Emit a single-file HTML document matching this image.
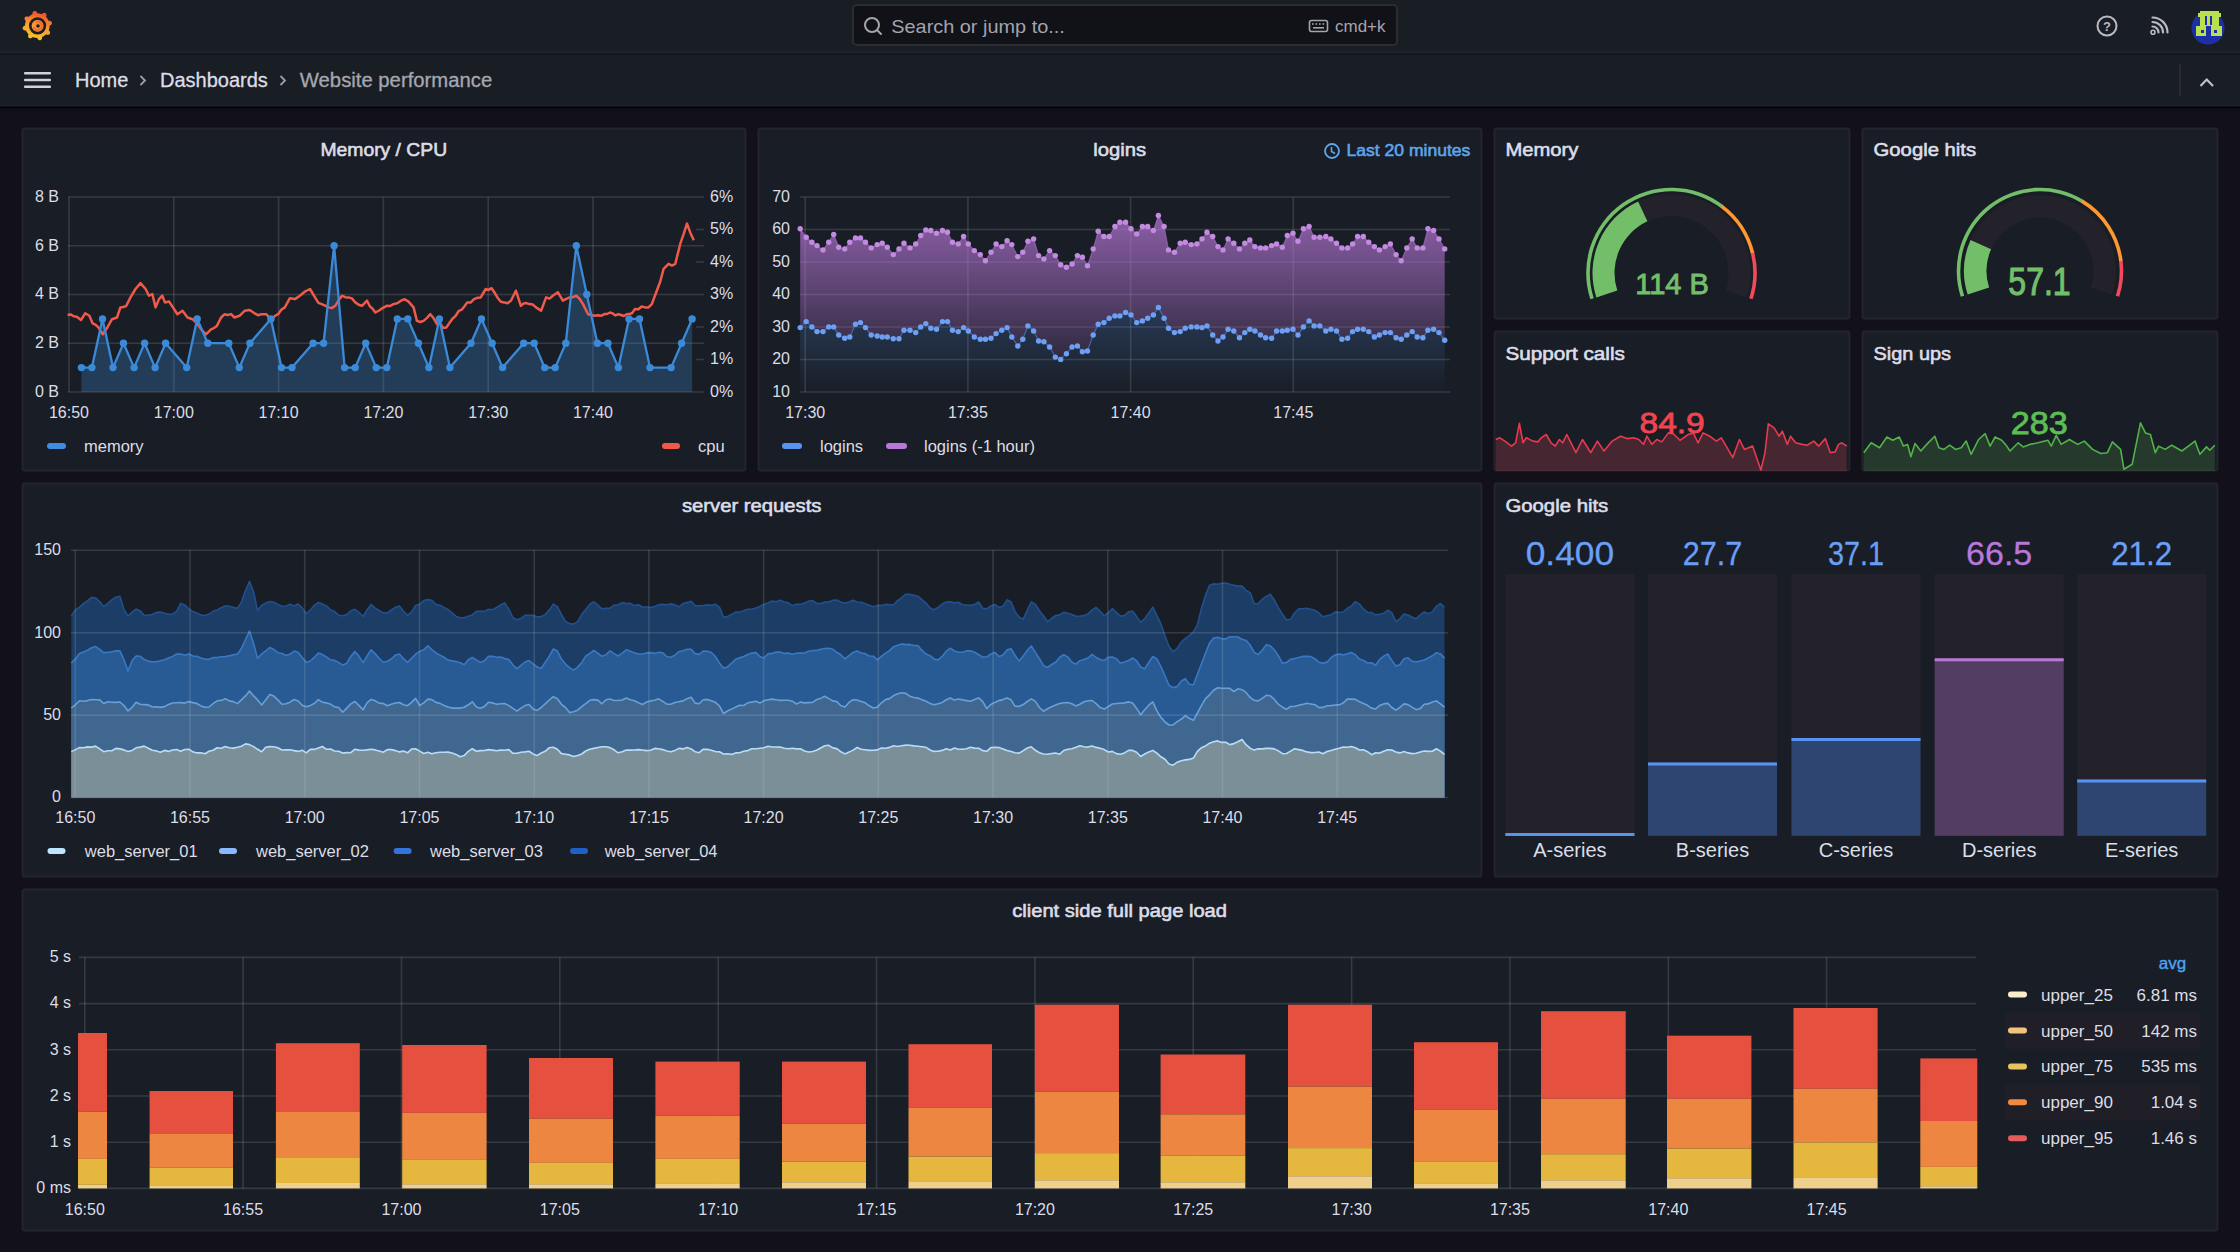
<!DOCTYPE html>
<html><head><meta charset="utf-8"><style>
html,body{margin:0;padding:0;background:#12111a;width:2240px;height:1252px;overflow:hidden}
svg{display:block;font-family:"Liberation Sans", sans-serif}
</style></head><body>
<svg width="2240" height="1252" viewBox="0 0 2240 1252">
<rect x="0.0" y="0.0" width="2240.0" height="1252.0" fill="#12111a" />
<rect x="0.0" y="0.0" width="2240.0" height="53.0" fill="#191e25" />
<rect x="0.0" y="51.5" width="2240.0" height="2.0" fill="#21262e" />
<rect x="0.0" y="53.5" width="2240.0" height="1.5" fill="#14181e" />
<rect x="0.0" y="55.0" width="2240.0" height="51.0" fill="#191e25" />
<rect x="0.0" y="105.0" width="2240.0" height="1.5" fill="#1e232a" />
<rect x="0.0" y="106.5" width="2240.0" height="2.0" fill="#05060a" />
<rect x="0.0" y="108.5" width="2240.0" height="3.0" fill="#0c0f16" />
<defs><linearGradient id="logog" x1="0" y1="1" x2="0.3" y2="0"><stop offset="0" stop-color="#fccf1c"/><stop offset="0.55" stop-color="#f7a030"/><stop offset="1" stop-color="#f0562c"/></linearGradient></defs>
<path d="M49.60,25.60 L49.60,25.71 L49.60,25.81 L49.60,25.92 L49.59,26.03 L49.59,26.14 L49.58,26.24 L49.58,26.35 L49.57,26.46 L49.56,26.57 L49.55,26.67 L49.54,26.78 L49.53,26.89 L49.52,26.99 L49.51,27.10 L49.49,27.21 L49.48,27.31 L49.46,27.42 L49.45,27.52 L49.43,27.63 L49.41,27.74 L49.39,27.84 L49.37,27.95 L49.35,28.05 L49.33,28.16 L49.31,28.26 L49.28,28.37 L49.26,28.47 L49.23,28.58 L49.21,28.68 L49.18,28.78 L49.15,28.89 L49.12,28.99 L49.09,29.09 L49.06,29.20 L49.03,29.30 L49.00,29.40 L48.96,29.50 L48.93,29.60 L48.89,29.71 L48.86,29.81 L48.82,29.91 L48.78,30.01 L48.74,30.11 L48.70,30.21 L48.95,30.43 L49.22,30.66 L49.40,30.86 L49.54,31.05 L49.65,31.23 L49.74,31.40 L49.82,31.57 L49.89,31.74 L49.94,31.90 L49.98,32.06 L50.02,32.22 L50.04,32.37 L50.05,32.52 L50.06,32.67 L50.05,32.81 L50.04,32.95 L50.02,33.09 L49.99,33.22 L49.95,33.35 L49.91,33.48 L49.85,33.60 L49.79,33.71 L49.72,33.82 L49.65,33.93 L49.57,34.03 L49.48,34.13 L49.38,34.22 L49.28,34.30 L49.17,34.38 L49.05,34.46 L48.93,34.52 L48.80,34.59 L48.67,34.64 L48.52,34.69 L48.37,34.73 L48.22,34.76 L48.05,34.79 L47.89,34.80 L47.71,34.81 L47.52,34.80 L47.33,34.79 L47.12,34.76 L46.89,34.70 L46.65,34.63 L46.34,34.49 L46.00,34.30 L45.92,34.37 L45.84,34.45 L45.77,34.52 L45.69,34.60 L45.61,34.67 L45.53,34.74 L45.45,34.81 L45.37,34.88 L45.29,34.95 L45.21,35.02 L45.12,35.09 L45.04,35.16 L44.96,35.23 L44.87,35.29 L44.79,35.36 L44.70,35.42 L44.62,35.49 L44.53,35.55 L44.44,35.61 L44.35,35.68 L44.27,35.74 L44.18,35.80 L44.09,35.86 L44.00,35.92 L43.91,35.97 L43.82,36.03 L43.73,36.09 L43.63,36.14 L43.54,36.20 L43.45,36.25 L43.36,36.31 L43.26,36.36 L43.17,36.41 L43.07,36.46 L42.98,36.51 L42.88,36.56 L42.79,36.61 L42.69,36.66 L42.60,36.70 L42.50,36.75 L42.40,36.79 L42.30,36.84 L42.20,36.88 L42.11,36.92 L42.13,37.25 L42.15,37.61 L42.13,37.87 L42.10,38.10 L42.05,38.31 L42.00,38.50 L41.93,38.68 L41.86,38.84 L41.78,39.00 L41.70,39.14 L41.61,39.27 L41.52,39.40 L41.42,39.51 L41.32,39.62 L41.22,39.72 L41.11,39.81 L41.00,39.89 L40.88,39.96 L40.76,40.03 L40.64,40.08 L40.52,40.13 L40.40,40.17 L40.27,40.20 L40.14,40.22 L40.01,40.24 L39.88,40.24 L39.75,40.24 L39.62,40.23 L39.48,40.20 L39.35,40.17 L39.21,40.13 L39.08,40.09 L38.94,40.03 L38.81,39.96 L38.68,39.88 L38.54,39.80 L38.41,39.70 L38.28,39.59 L38.15,39.47 L38.02,39.34 L37.89,39.19 L37.77,39.02 L37.65,38.82 L37.53,38.59 L37.41,38.28 L37.30,37.90 L37.19,37.90 L37.09,37.90 L36.98,37.90 L36.87,37.89 L36.76,37.89 L36.66,37.88 L36.55,37.88 L36.44,37.87 L36.33,37.86 L36.23,37.85 L36.12,37.84 L36.01,37.83 L35.91,37.82 L35.80,37.81 L35.69,37.79 L35.59,37.78 L35.48,37.76 L35.38,37.75 L35.27,37.73 L35.16,37.71 L35.06,37.69 L34.95,37.67 L34.85,37.65 L34.74,37.63 L34.64,37.61 L34.53,37.58 L34.43,37.56 L34.32,37.53 L34.22,37.51 L34.12,37.48 L34.01,37.45 L33.91,37.42 L33.81,37.39 L33.70,37.36 L33.60,37.33 L33.50,37.30 L33.40,37.26 L33.30,37.23 L33.19,37.19 L33.09,37.16 L32.99,37.12 L32.89,37.08 L32.79,37.04 L32.69,37.00 L32.47,37.25 L32.24,37.52 L32.04,37.70 L31.85,37.84 L31.67,37.95 L31.50,38.04 L31.33,38.12 L31.16,38.19 L31.00,38.24 L30.84,38.28 L30.68,38.32 L30.53,38.34 L30.38,38.35 L30.23,38.36 L30.09,38.35 L29.95,38.34 L29.81,38.32 L29.68,38.29 L29.55,38.25 L29.42,38.21 L29.30,38.15 L29.19,38.09 L29.08,38.02 L28.97,37.95 L28.87,37.87 L28.77,37.78 L28.68,37.68 L28.60,37.58 L28.52,37.47 L28.44,37.35 L28.38,37.23 L28.31,37.10 L28.26,36.97 L28.21,36.82 L28.17,36.67 L28.14,36.52 L28.11,36.35 L28.10,36.19 L28.09,36.01 L28.10,35.82 L28.11,35.63 L28.14,35.42 L28.20,35.19 L28.27,34.95 L28.41,34.64 L28.60,34.30 L28.53,34.22 L28.45,34.14 L28.38,34.07 L28.30,33.99 L28.23,33.91 L28.16,33.83 L28.09,33.75 L28.02,33.67 L27.95,33.59 L27.88,33.51 L27.81,33.42 L27.74,33.34 L27.67,33.26 L27.61,33.17 L27.54,33.09 L27.48,33.00 L27.41,32.92 L27.35,32.83 L27.29,32.74 L27.22,32.65 L27.16,32.57 L27.10,32.48 L27.04,32.39 L26.98,32.30 L26.93,32.21 L26.87,32.12 L26.81,32.03 L26.76,31.93 L26.70,31.84 L26.65,31.75 L26.59,31.66 L26.54,31.56 L26.49,31.47 L26.44,31.37 L26.39,31.28 L26.34,31.18 L26.29,31.09 L26.24,30.99 L26.20,30.90 L26.15,30.80 L26.11,30.70 L26.06,30.60 L26.02,30.50 L25.98,30.41 L25.65,30.43 L25.29,30.45 L25.03,30.43 L24.80,30.40 L24.59,30.35 L24.40,30.30 L24.22,30.23 L24.06,30.16 L23.90,30.08 L23.76,30.00 L23.63,29.91 L23.50,29.82 L23.39,29.72 L23.28,29.62 L23.18,29.52 L23.09,29.41 L23.01,29.30 L22.94,29.18 L22.87,29.06 L22.82,28.94 L22.77,28.82 L22.73,28.70 L22.70,28.57 L22.68,28.44 L22.66,28.31 L22.66,28.18 L22.66,28.05 L22.67,27.92 L22.70,27.78 L22.73,27.65 L22.77,27.51 L22.81,27.38 L22.87,27.24 L22.94,27.11 L23.02,26.98 L23.10,26.84 L23.20,26.71 L23.31,26.58 L23.43,26.45 L23.56,26.32 L23.71,26.19 L23.88,26.07 L24.08,25.95 L24.31,25.83 L24.62,25.71 L25.00,25.60 L25.00,25.49 L25.00,25.39 L25.00,25.28 L25.01,25.17 L25.01,25.06 L25.02,24.96 L25.02,24.85 L25.03,24.74 L25.04,24.63 L25.05,24.53 L25.06,24.42 L25.07,24.31 L25.08,24.21 L25.09,24.10 L25.11,23.99 L25.12,23.89 L25.14,23.78 L25.15,23.68 L25.17,23.57 L25.19,23.46 L25.21,23.36 L25.23,23.25 L25.25,23.15 L25.27,23.04 L25.29,22.94 L25.32,22.83 L25.34,22.73 L25.37,22.62 L25.39,22.52 L25.42,22.42 L25.45,22.31 L25.48,22.21 L25.51,22.11 L25.54,22.00 L25.57,21.90 L25.60,21.80 L25.64,21.70 L25.67,21.60 L25.71,21.49 L25.74,21.39 L25.78,21.29 L25.82,21.19 L25.86,21.09 L25.90,20.99 L25.65,20.77 L25.38,20.54 L25.20,20.34 L25.06,20.15 L24.95,19.97 L24.86,19.80 L24.78,19.63 L24.71,19.46 L24.66,19.30 L24.62,19.14 L24.58,18.98 L24.56,18.83 L24.55,18.68 L24.54,18.53 L24.55,18.39 L24.56,18.25 L24.58,18.11 L24.61,17.98 L24.65,17.85 L24.69,17.72 L24.75,17.60 L24.81,17.49 L24.88,17.38 L24.95,17.27 L25.03,17.17 L25.12,17.07 L25.22,16.98 L25.32,16.90 L25.43,16.82 L25.55,16.74 L25.67,16.68 L25.80,16.61 L25.93,16.56 L26.08,16.51 L26.23,16.47 L26.38,16.44 L26.55,16.41 L26.71,16.40 L26.89,16.39 L27.08,16.40 L27.27,16.41 L27.48,16.44 L27.71,16.50 L27.95,16.57 L28.26,16.71 L28.60,16.90 L28.68,16.83 L28.76,16.75 L28.83,16.68 L28.91,16.60 L28.99,16.53 L29.07,16.46 L29.15,16.39 L29.23,16.32 L29.31,16.25 L29.39,16.18 L29.48,16.11 L29.56,16.04 L29.64,15.97 L29.73,15.91 L29.81,15.84 L29.90,15.78 L29.98,15.71 L30.07,15.65 L30.16,15.59 L30.25,15.52 L30.33,15.46 L30.42,15.40 L30.51,15.34 L30.60,15.28 L30.69,15.23 L30.78,15.17 L30.87,15.11 L30.97,15.06 L31.06,15.00 L31.15,14.95 L31.24,14.89 L31.34,14.84 L31.43,14.79 L31.53,14.74 L31.62,14.69 L31.72,14.64 L31.81,14.59 L31.91,14.54 L32.00,14.50 L32.10,14.45 L32.20,14.41 L32.30,14.36 L32.40,14.32 L32.49,14.28 L32.47,13.95 L32.45,13.59 L32.47,13.33 L32.50,13.10 L32.55,12.89 L32.60,12.70 L32.67,12.52 L32.74,12.36 L32.82,12.20 L32.90,12.06 L32.99,11.93 L33.08,11.80 L33.18,11.69 L33.28,11.58 L33.38,11.48 L33.49,11.39 L33.60,11.31 L33.72,11.24 L33.84,11.17 L33.96,11.12 L34.08,11.07 L34.20,11.03 L34.33,11.00 L34.46,10.98 L34.59,10.96 L34.72,10.96 L34.85,10.96 L34.98,10.97 L35.12,11.00 L35.25,11.03 L35.39,11.07 L35.52,11.11 L35.66,11.17 L35.79,11.24 L35.92,11.32 L36.06,11.40 L36.19,11.50 L36.32,11.61 L36.45,11.73 L36.58,11.86 L36.71,12.01 L36.83,12.18 L36.95,12.38 L37.07,12.61 L37.19,12.92 L37.30,13.30 L37.41,13.30 L37.51,13.30 L37.62,13.30 L37.73,13.31 L37.84,13.31 L37.94,13.32 L38.05,13.32 L38.16,13.33 L38.27,13.34 L38.37,13.35 L38.48,13.36 L38.59,13.37 L38.69,13.38 L38.80,13.39 L38.91,13.41 L39.01,13.42 L39.12,13.44 L39.22,13.45 L39.33,13.47 L39.44,13.49 L39.54,13.51 L39.65,13.53 L39.75,13.55 L39.86,13.57 L39.96,13.59 L40.07,13.62 L40.17,13.64 L40.28,13.67 L40.38,13.69 L40.48,13.72 L40.59,13.75 L40.69,13.78 L40.79,13.81 L40.90,13.84 L41.00,13.87 L41.10,13.90 L41.20,13.94 L41.30,13.97 L41.41,14.01 L41.51,14.04 L41.61,14.08 L41.71,14.12 L41.81,14.16 L41.91,14.20 L42.13,13.95 L42.36,13.68 L42.56,13.50 L42.75,13.36 L42.93,13.25 L43.10,13.16 L43.27,13.08 L43.44,13.01 L43.60,12.96 L43.76,12.92 L43.92,12.88 L44.07,12.86 L44.22,12.85 L44.37,12.84 L44.51,12.85 L44.65,12.86 L44.79,12.88 L44.92,12.91 L45.05,12.95 L45.18,12.99 L45.30,13.05 L45.41,13.11 L45.52,13.18 L45.63,13.25 L45.73,13.33 L45.83,13.42 L45.92,13.52 L46.00,13.62 L46.08,13.73 L46.16,13.85 L46.22,13.97 L46.29,14.10 L46.34,14.23 L46.39,14.38 L46.43,14.53 L46.46,14.68 L46.49,14.85 L46.50,15.01 L46.51,15.19 L46.50,15.38 L46.49,15.57 L46.46,15.78 L46.40,16.01 L46.33,16.25 L46.19,16.56 L46.00,16.90 L46.07,16.98 L46.15,17.06 L46.22,17.13 L46.30,17.21 L46.37,17.29 L46.44,17.37 L46.51,17.45 L46.58,17.53 L46.65,17.61 L46.72,17.69 L46.79,17.78 L46.86,17.86 L46.93,17.94 L46.99,18.03 L47.06,18.11 L47.12,18.20 L47.19,18.28 L47.25,18.37 L47.31,18.46 L47.38,18.55 L47.44,18.63 L47.50,18.72 L47.56,18.81 L47.62,18.90 L47.67,18.99 L47.73,19.08 L47.79,19.17 L47.84,19.27 L47.90,19.36 L47.95,19.45 L48.01,19.54 L48.06,19.64 L48.11,19.73 L48.16,19.83 L48.21,19.92 L48.26,20.02 L48.31,20.11 L48.36,20.21 L48.40,20.30 L48.45,20.40 L48.49,20.50 L48.54,20.60 L48.58,20.70 L48.62,20.79 L48.95,20.77 L49.31,20.75 L49.57,20.77 L49.80,20.80 L50.01,20.85 L50.20,20.90 L50.38,20.97 L50.54,21.04 L50.70,21.12 L50.84,21.20 L50.97,21.29 L51.10,21.38 L51.21,21.48 L51.32,21.58 L51.42,21.68 L51.51,21.79 L51.59,21.90 L51.66,22.02 L51.73,22.14 L51.78,22.26 L51.83,22.38 L51.87,22.50 L51.90,22.63 L51.92,22.76 L51.94,22.89 L51.94,23.02 L51.94,23.15 L51.93,23.28 L51.90,23.42 L51.87,23.55 L51.83,23.69 L51.79,23.82 L51.73,23.96 L51.66,24.09 L51.58,24.22 L51.50,24.36 L51.40,24.49 L51.29,24.62 L51.17,24.75 L51.04,24.88 L50.89,25.01 L50.72,25.13 L50.52,25.25 L50.29,25.37 L49.98,25.49Z" fill="url(#logog)"/>
<circle cx="37.6" cy="25.8" r="7.3" fill="none" stroke="#1a1d24" stroke-width="2.6"/>
<path d="M37.6,21.6 A4.2,4.2 0 1 1 33.6,27" fill="none" stroke="#f26b3a" stroke-width="2.4"/>
<circle cx="38" cy="26" r="1.8" fill="#1a1d24"/>
<rect x="853" y="5" width="544" height="40" rx="4" fill="#111118" stroke="#2c2c35" stroke-width="2"/>
<circle cx="872" cy="25" r="7" fill="none" stroke="#a3a4ad" stroke-width="2"/><line x1="877" y1="30" x2="881" y2="34" stroke="#a3a4ad" stroke-width="2" stroke-linecap="round"/>
<text x="891.3" y="32.5" font-size="18.5" fill="#a3a4ad" text-anchor="start" font-weight="normal"  textLength="173.5" lengthAdjust="spacingAndGlyphs">Search or jump to...</text>
<rect x="1309.5" y="20.5" width="18" height="11" rx="2" fill="none" stroke="#a3a4ad" stroke-width="1.6"/>
<rect x="1312.0" y="23.2" width="1.6" height="1.6" fill="#a3a4ad"/>
<rect x="1315.5" y="23.2" width="1.6" height="1.6" fill="#a3a4ad"/>
<rect x="1319.0" y="23.2" width="1.6" height="1.6" fill="#a3a4ad"/>
<rect x="1322.5" y="23.2" width="1.6" height="1.6" fill="#a3a4ad"/>
<rect x="1313" y="27" width="11" height="1.6" fill="#a3a4ad"/>
<text x="1335.0" y="31.5" font-size="17" fill="#a3a4ad" text-anchor="start" font-weight="normal" >cmd+k</text>
<circle cx="2107" cy="26" r="9.5" fill="none" stroke="#b9bac3" stroke-width="2"/>
<text x="2107.0" y="31.0" font-size="13" fill="#b9bac3" text-anchor="middle" font-weight="bold" >?</text>
<g stroke="#b9bac3" stroke-width="2.2" fill="none" stroke-linecap="round"><path d="M2152.5,26.5 A6,6 0 0 1 2158.5,32.5"/><path d="M2152.5,22 A10.5,10.5 0 0 1 2163,32.5"/><path d="M2152.5,17.5 A15,15 0 0 1 2167.5,32.5"/></g><circle cx="2153" cy="32.3" r="2" fill="none" stroke="#b9bac3" stroke-width="1.6"/>
<circle cx="2208" cy="28" r="16.5" fill="#1d2fa8"/>
<g fill="#b9e04f"><rect x="2200" y="11" width="19" height="15"/><rect x="2198" y="13" width="4" height="4"/><rect x="2217" y="13" width="4" height="4"/><rect x="2196" y="26" width="10" height="10"/><rect x="2211" y="26" width="11" height="10"/></g>
<g fill="#1d2fa8"><rect x="2205" y="16" width="2" height="9"/><rect x="2210" y="16" width="2" height="9"/><rect x="2201" y="30" width="3" height="3"/><rect x="2214" y="30" width="3" height="3"/></g>
<g fill="#d0d1da"><rect x="24" y="72" width="27" height="2.6" rx="1"/><rect x="24" y="78.7" width="27" height="2.6" rx="1"/><rect x="24" y="85.4" width="27" height="2.6" rx="1"/></g>
<text x="75.0" y="86.8" font-size="20" fill="#dcdde6" text-anchor="start" font-weight="normal"  stroke="#dcdde6" stroke-width="0.3">Home</text>
<path d="M140.5,76 L145,80.5 L140.5,85" fill="none" stroke="#9d9ea8" stroke-width="1.8"/>
<text x="160.0" y="86.8" font-size="20" fill="#dcdde6" text-anchor="start" font-weight="normal"  stroke="#dcdde6" stroke-width="0.3">Dashboards</text>
<path d="M280.5,76 L285,80.5 L280.5,85" fill="none" stroke="#9d9ea8" stroke-width="1.8"/>
<text x="299.8" y="86.8" font-size="20" fill="#a6a7b0" text-anchor="start" font-weight="normal"  textLength="192.4" lengthAdjust="spacingAndGlyphs" stroke="#a6a7b0" stroke-width="0.3">Website performance</text>
<rect x="2179.0" y="64.0" width="2.0" height="32.0" fill="#2a2b32" />
<path d="M2200.5,86 L2206.7,79.5 L2213,86" fill="none" stroke="#c0c1ca" stroke-width="2.2"/>
<rect x="22.5" y="128.5" width="723" height="342" rx="2.5" fill="#191e26" stroke="#24242e" stroke-width="2"/>
<text x="383.8" y="156.4" font-size="18.5" fill="#dcdde8" text-anchor="middle" font-weight="normal"  textLength="126.7" lengthAdjust="spacingAndGlyphs" stroke="#dcdde8" stroke-width="0.6">Memory / CPU</text>
<line x1="68.0" y1="197.0" x2="704.0" y2="197.0" stroke="rgba(204,204,220,0.16)" stroke-width="1.6" />
<line x1="68.0" y1="245.8" x2="704.0" y2="245.8" stroke="rgba(204,204,220,0.16)" stroke-width="1.6" />
<line x1="68.0" y1="294.5" x2="704.0" y2="294.5" stroke="rgba(204,204,220,0.16)" stroke-width="1.6" />
<line x1="68.0" y1="343.2" x2="704.0" y2="343.2" stroke="rgba(204,204,220,0.16)" stroke-width="1.6" />
<line x1="68.0" y1="392.0" x2="704.0" y2="392.0" stroke="rgba(204,204,220,0.16)" stroke-width="1.6" />
<line x1="69.0" y1="197.0" x2="69.0" y2="392.0" stroke="rgba(204,204,220,0.16)" stroke-width="1.6" />
<line x1="173.8" y1="197.0" x2="173.8" y2="392.0" stroke="rgba(204,204,220,0.16)" stroke-width="1.6" />
<line x1="278.6" y1="197.0" x2="278.6" y2="392.0" stroke="rgba(204,204,220,0.16)" stroke-width="1.6" />
<line x1="383.4" y1="197.0" x2="383.4" y2="392.0" stroke="rgba(204,204,220,0.16)" stroke-width="1.6" />
<line x1="488.2" y1="197.0" x2="488.2" y2="392.0" stroke="rgba(204,204,220,0.16)" stroke-width="1.6" />
<line x1="593.0" y1="197.0" x2="593.0" y2="392.0" stroke="rgba(204,204,220,0.16)" stroke-width="1.6" />
<line x1="696.0" y1="359.5" x2="704.0" y2="359.5" stroke="rgba(204,204,220,0.16)" stroke-width="1.6" />
<line x1="696.0" y1="327.0" x2="704.0" y2="327.0" stroke="rgba(204,204,220,0.16)" stroke-width="1.6" />
<line x1="696.0" y1="262.0" x2="704.0" y2="262.0" stroke="rgba(204,204,220,0.16)" stroke-width="1.6" />
<line x1="696.0" y1="229.5" x2="704.0" y2="229.5" stroke="rgba(204,204,220,0.16)" stroke-width="1.6" />
<text x="59.0" y="201.8" font-size="16" fill="#dcdde6" text-anchor="end" font-weight="normal" >8 B</text>
<text x="59.0" y="250.6" font-size="16" fill="#dcdde6" text-anchor="end" font-weight="normal" >6 B</text>
<text x="59.0" y="299.3" font-size="16" fill="#dcdde6" text-anchor="end" font-weight="normal" >4 B</text>
<text x="59.0" y="348.1" font-size="16" fill="#dcdde6" text-anchor="end" font-weight="normal" >2 B</text>
<text x="59.0" y="396.8" font-size="16" fill="#dcdde6" text-anchor="end" font-weight="normal" >0 B</text>
<text x="710.0" y="201.8" font-size="16" fill="#dcdde6" text-anchor="start" font-weight="normal" >6%</text>
<text x="710.0" y="234.3" font-size="16" fill="#dcdde6" text-anchor="start" font-weight="normal" >5%</text>
<text x="710.0" y="266.8" font-size="16" fill="#dcdde6" text-anchor="start" font-weight="normal" >4%</text>
<text x="710.0" y="299.3" font-size="16" fill="#dcdde6" text-anchor="start" font-weight="normal" >3%</text>
<text x="710.0" y="331.8" font-size="16" fill="#dcdde6" text-anchor="start" font-weight="normal" >2%</text>
<text x="710.0" y="364.3" font-size="16" fill="#dcdde6" text-anchor="start" font-weight="normal" >1%</text>
<text x="710.0" y="396.8" font-size="16" fill="#dcdde6" text-anchor="start" font-weight="normal" >0%</text>
<text x="69.0" y="417.5" font-size="16" fill="#dcdde6" text-anchor="middle" font-weight="normal" >16:50</text>
<text x="173.8" y="417.5" font-size="16" fill="#dcdde6" text-anchor="middle" font-weight="normal" >17:00</text>
<text x="278.6" y="417.5" font-size="16" fill="#dcdde6" text-anchor="middle" font-weight="normal" >17:10</text>
<text x="383.4" y="417.5" font-size="16" fill="#dcdde6" text-anchor="middle" font-weight="normal" >17:20</text>
<text x="488.2" y="417.5" font-size="16" fill="#dcdde6" text-anchor="middle" font-weight="normal" >17:30</text>
<text x="593.0" y="417.5" font-size="16" fill="#dcdde6" text-anchor="middle" font-weight="normal" >17:40</text>
<path d="M81.4,367.6 L91.9,367.6 L102.5,318.9 L113.0,367.6 L123.5,343.2 L134.1,367.6 L144.6,343.2 L155.1,367.6 L165.6,343.2 L186.7,367.6 L197.2,318.9 L207.8,343.2 L228.8,343.2 L239.3,367.6 L249.9,343.2 L270.9,318.9 L281.5,367.6 L292.0,367.6 L313.1,343.2 L323.6,343.2 L334.1,245.8 L344.6,367.6 L355.2,367.6 L365.7,343.2 L376.2,367.6 L386.8,367.6 L397.3,318.9 L407.8,318.9 L418.4,343.2 L428.9,367.6 L439.4,318.9 L449.9,367.6 L471.0,343.2 L481.5,318.9 L492.1,343.2 L502.6,367.6 L523.7,343.2 L534.2,343.2 L544.7,367.6 L555.2,367.6 L565.8,343.2 L576.3,245.8 L586.8,294.5 L597.4,343.2 L607.9,343.2 L618.4,367.6 L629.0,318.9 L639.5,318.9 L650.0,367.6 L671.1,367.6 L681.6,343.2 L692.1,318.9 L692.1,392.0 L81.4,392.0Z" fill="#3d8ee0" fill-opacity="0.28"/>
<path d="M67.6,315.0 L70.6,314.4 L73.7,316.3 L76.8,316.7 L81.0,320.0 L85.2,313.3 L89.4,315.8 L92.7,323.4 L95.7,324.9 L98.6,327.6 L102.8,334.3 L107.8,326.7 L112.0,319.2 L117.0,317.5 L120.4,307.4 L123.3,307.1 L126.3,305.8 L130.5,297.4 L135.5,289.0 L140.5,283.1 L145.6,289.0 L148.9,295.7 L152.3,294.0 L155.6,307.4 L159.0,299.1 L162.3,295.7 L164.9,302.4 L169.1,301.6 L174.1,309.1 L177.4,314.2 L182.5,310.8 L187.5,317.5 L192.6,319.2 L197.6,324.2 L202.6,330.9 L206.0,334.3 L211.0,329.3 L213.9,328.1 L216.9,325.9 L221.1,317.5 L224.4,314.3 L227.8,315.0 L231.1,314.1 L234.5,317.5 L239.5,315.8 L244.6,310.8 L249.6,310.0 L254.6,313.3 L258.0,315.2 L261.3,314.2 L266.4,314.2 L271.4,320.0 L274.8,316.0 L278.1,314.2 L281.5,309.6 L284.8,307.4 L289.9,298.2 L294.9,299.1 L299.9,295.7 L305.0,291.5 L310.0,289.0 L315.0,297.4 L318.4,302.9 L321.7,304.1 L325.1,305.6 L328.5,307.4 L331.8,308.1 L335.2,305.8 L338.5,300.6 L341.9,295.7 L345.2,297.2 L348.6,297.4 L351.9,298.4 L355.3,302.4 L358.7,304.7 L362.0,305.8 L367.0,300.7 L369.8,306.3 L372.6,308.7 L375.4,312.5 L380.0,310.0 L382.1,308.3 L386.7,305.8 L390.1,306.0 L393.4,304.1 L397.2,303.2 L401.0,300.7 L404.7,299.2 L408.5,301.6 L413.6,307.4 L416.9,320.9 L420.3,322.0 L423.6,320.9 L427.0,317.9 L430.3,314.2 L433.7,318.3 L437.0,324.2 L440.1,323.3 L443.2,328.1 L446.3,327.6 L449.2,323.3 L452.1,319.2 L455.5,316.0 L458.9,310.8 L461.7,309.7 L464.5,306.2 L467.2,302.4 L470.6,302.6 L474.0,299.1 L477.3,297.8 L480.7,297.4 L485.7,289.0 L488.6,289.9 L491.6,288.2 L494.5,292.5 L497.4,297.4 L500.8,301.8 L504.2,302.4 L507.5,303.2 L510.9,300.7 L515.9,290.7 L520.9,305.8 L523.7,303.4 L526.5,303.1 L529.3,304.1 L532.7,304.5 L536.0,307.4 L541.1,310.8 L546.1,297.4 L549.5,298.6 L552.8,295.7 L557.9,292.3 L562.9,300.7 L566.2,298.8 L569.6,297.4 L573.0,297.1 L576.3,295.7 L579.7,299.0 L583.0,304.1 L588.1,314.2 L591.4,315.0 L594.8,315.8 L598.1,315.3 L601.5,315.8 L604.3,314.1 L607.1,314.0 L609.9,312.5 L612.7,313.4 L615.5,315.4 L618.3,314.2 L621.1,315.0 L623.8,316.0 L626.6,314.2 L629.4,314.1 L632.2,313.0 L635.0,309.1 L638.4,309.3 L641.7,306.5 L645.1,307.4 L648.5,307.4 L651.8,304.1 L656.8,290.7 L660.2,281.8 L663.6,268.9 L668.6,263.8 L671.9,265.6 L675.3,263.8 L680.3,243.7 L683.7,233.9 L687.0,223.6 L690.4,232.9 L693.8,240.3" fill="none" stroke="#f05a4a" stroke-width="2.5" stroke-linejoin="round"/>
<path d="M81.4,367.6 L91.9,367.6 L102.5,318.9 L113.0,367.6 L123.5,343.2 L134.1,367.6 L144.6,343.2 L155.1,367.6 L165.6,343.2 L186.7,367.6 L197.2,318.9 L207.8,343.2 L228.8,343.2 L239.3,367.6 L249.9,343.2 L270.9,318.9 L281.5,367.6 L292.0,367.6 L313.1,343.2 L323.6,343.2 L334.1,245.8 L344.6,367.6 L355.2,367.6 L365.7,343.2 L376.2,367.6 L386.8,367.6 L397.3,318.9 L407.8,318.9 L418.4,343.2 L428.9,367.6 L439.4,318.9 L449.9,367.6 L471.0,343.2 L481.5,318.9 L492.1,343.2 L502.6,367.6 L523.7,343.2 L534.2,343.2 L544.7,367.6 L555.2,367.6 L565.8,343.2 L576.3,245.8 L586.8,294.5 L597.4,343.2 L607.9,343.2 L618.4,367.6 L629.0,318.9 L639.5,318.9 L650.0,367.6 L671.1,367.6 L681.6,343.2 L692.1,318.9" fill="none" stroke="#3b8ad8" stroke-width="2.3" stroke-linejoin="round"/>
<g fill="#3b8ad8"><circle cx="81.4" cy="367.6" r="3.7"/><circle cx="91.9" cy="367.6" r="3.7"/><circle cx="102.5" cy="318.9" r="3.7"/><circle cx="113.0" cy="367.6" r="3.7"/><circle cx="123.5" cy="343.2" r="3.7"/><circle cx="134.1" cy="367.6" r="3.7"/><circle cx="144.6" cy="343.2" r="3.7"/><circle cx="155.1" cy="367.6" r="3.7"/><circle cx="165.6" cy="343.2" r="3.7"/><circle cx="186.7" cy="367.6" r="3.7"/><circle cx="197.2" cy="318.9" r="3.7"/><circle cx="207.8" cy="343.2" r="3.7"/><circle cx="228.8" cy="343.2" r="3.7"/><circle cx="239.3" cy="367.6" r="3.7"/><circle cx="249.9" cy="343.2" r="3.7"/><circle cx="270.9" cy="318.9" r="3.7"/><circle cx="281.5" cy="367.6" r="3.7"/><circle cx="292.0" cy="367.6" r="3.7"/><circle cx="313.1" cy="343.2" r="3.7"/><circle cx="323.6" cy="343.2" r="3.7"/><circle cx="334.1" cy="245.8" r="3.7"/><circle cx="344.6" cy="367.6" r="3.7"/><circle cx="355.2" cy="367.6" r="3.7"/><circle cx="365.7" cy="343.2" r="3.7"/><circle cx="376.2" cy="367.6" r="3.7"/><circle cx="386.8" cy="367.6" r="3.7"/><circle cx="397.3" cy="318.9" r="3.7"/><circle cx="407.8" cy="318.9" r="3.7"/><circle cx="418.4" cy="343.2" r="3.7"/><circle cx="428.9" cy="367.6" r="3.7"/><circle cx="439.4" cy="318.9" r="3.7"/><circle cx="449.9" cy="367.6" r="3.7"/><circle cx="471.0" cy="343.2" r="3.7"/><circle cx="481.5" cy="318.9" r="3.7"/><circle cx="492.1" cy="343.2" r="3.7"/><circle cx="502.6" cy="367.6" r="3.7"/><circle cx="523.7" cy="343.2" r="3.7"/><circle cx="534.2" cy="343.2" r="3.7"/><circle cx="544.7" cy="367.6" r="3.7"/><circle cx="555.2" cy="367.6" r="3.7"/><circle cx="565.8" cy="343.2" r="3.7"/><circle cx="576.3" cy="245.8" r="3.7"/><circle cx="586.8" cy="294.5" r="3.7"/><circle cx="597.4" cy="343.2" r="3.7"/><circle cx="607.9" cy="343.2" r="3.7"/><circle cx="618.4" cy="367.6" r="3.7"/><circle cx="629.0" cy="318.9" r="3.7"/><circle cx="639.5" cy="318.9" r="3.7"/><circle cx="650.0" cy="367.6" r="3.7"/><circle cx="671.1" cy="367.6" r="3.7"/><circle cx="681.6" cy="343.2" r="3.7"/><circle cx="692.1" cy="318.9" r="3.7"/></g>
<rect x="47" y="443" width="19" height="6" rx="3" fill="#3d8ee0"/>
<text x="84.0" y="451.5" font-size="16.5" fill="#dcdde6" text-anchor="start" font-weight="normal" >memory</text>
<rect x="662" y="443" width="18" height="6" rx="3" fill="#f0584a"/>
<text x="698.0" y="451.5" font-size="16.5" fill="#dcdde6" text-anchor="start" font-weight="normal" >cpu</text>
<rect x="758.5" y="128.5" width="723" height="342" rx="2.5" fill="#191e26" stroke="#24242e" stroke-width="2"/>
<text x="1119.6" y="156.4" font-size="18.5" fill="#dcdde8" text-anchor="middle" font-weight="normal"  textLength="52.8" lengthAdjust="spacingAndGlyphs" stroke="#dcdde8" stroke-width="0.6">logins</text>
<circle cx="1332" cy="151" r="7" fill="none" stroke="#5ea6ea" stroke-width="1.8"/><path d="M1331.5,147 L1331.5,151.5 L1335,153.5" fill="none" stroke="#5ea6ea" stroke-width="1.6"/>
<text x="1346.6" y="156.3" font-size="16.5" fill="#5ea6ea" text-anchor="start" font-weight="normal"  textLength="123.8" lengthAdjust="spacingAndGlyphs" stroke="#5ea6ea" stroke-width="0.55">Last 20 minutes</text>
<line x1="800.0" y1="197.0" x2="1450.0" y2="197.0" stroke="rgba(204,204,220,0.16)" stroke-width="1.6" />
<line x1="800.0" y1="229.5" x2="1450.0" y2="229.5" stroke="rgba(204,204,220,0.16)" stroke-width="1.6" />
<line x1="800.0" y1="262.0" x2="1450.0" y2="262.0" stroke="rgba(204,204,220,0.16)" stroke-width="1.6" />
<line x1="800.0" y1="294.5" x2="1450.0" y2="294.5" stroke="rgba(204,204,220,0.16)" stroke-width="1.6" />
<line x1="800.0" y1="327.0" x2="1450.0" y2="327.0" stroke="rgba(204,204,220,0.16)" stroke-width="1.6" />
<line x1="800.0" y1="359.5" x2="1450.0" y2="359.5" stroke="rgba(204,204,220,0.16)" stroke-width="1.6" />
<line x1="800.0" y1="392.0" x2="1450.0" y2="392.0" stroke="rgba(204,204,220,0.16)" stroke-width="1.6" />
<line x1="805.2" y1="197.0" x2="805.2" y2="392.0" stroke="rgba(204,204,220,0.16)" stroke-width="1.6" />
<line x1="967.9" y1="197.0" x2="967.9" y2="392.0" stroke="rgba(204,204,220,0.16)" stroke-width="1.6" />
<line x1="1130.6" y1="197.0" x2="1130.6" y2="392.0" stroke="rgba(204,204,220,0.16)" stroke-width="1.6" />
<line x1="1293.3" y1="197.0" x2="1293.3" y2="392.0" stroke="rgba(204,204,220,0.16)" stroke-width="1.6" />
<text x="790.0" y="201.8" font-size="16" fill="#dcdde6" text-anchor="end" font-weight="normal" >70</text>
<text x="790.0" y="234.3" font-size="16" fill="#dcdde6" text-anchor="end" font-weight="normal" >60</text>
<text x="790.0" y="266.8" font-size="16" fill="#dcdde6" text-anchor="end" font-weight="normal" >50</text>
<text x="790.0" y="299.3" font-size="16" fill="#dcdde6" text-anchor="end" font-weight="normal" >40</text>
<text x="790.0" y="331.8" font-size="16" fill="#dcdde6" text-anchor="end" font-weight="normal" >30</text>
<text x="790.0" y="364.3" font-size="16" fill="#dcdde6" text-anchor="end" font-weight="normal" >20</text>
<text x="790.0" y="396.8" font-size="16" fill="#dcdde6" text-anchor="end" font-weight="normal" >10</text>
<text x="805.2" y="417.5" font-size="16" fill="#dcdde6" text-anchor="middle" font-weight="normal" >17:30</text>
<text x="967.9" y="417.5" font-size="16" fill="#dcdde6" text-anchor="middle" font-weight="normal" >17:35</text>
<text x="1130.6" y="417.5" font-size="16" fill="#dcdde6" text-anchor="middle" font-weight="normal" >17:40</text>
<text x="1293.3" y="417.5" font-size="16" fill="#dcdde6" text-anchor="middle" font-weight="normal" >17:45</text>
<defs><linearGradient id="gpur" gradientUnits="userSpaceOnUse" x1="0" y1="197" x2="0" y2="392"><stop offset="0" stop-color="#b877d9" stop-opacity="0.8"/><stop offset="1" stop-color="#b877d9" stop-opacity="0"/></linearGradient><linearGradient id="gblu" gradientUnits="userSpaceOnUse" x1="0" y1="197" x2="0" y2="392"><stop offset="0" stop-color="#5794f2" stop-opacity="0.55"/><stop offset="1" stop-color="#5794f2" stop-opacity="0"/></linearGradient></defs>
<path d="M800.2,228.8 L806.2,237.2 L811.9,242.2 L817.0,245.6 L823.0,249.9 L828.7,242.2 L833.7,234.5 L838.7,247.3 L844.7,248.9 L849.8,242.2 L855.5,237.9 L860.5,237.9 L865.5,242.2 L871.2,247.9 L877.2,244.6 L882.2,243.2 L887.3,247.3 L893.3,254.6 L899.0,248.9 L904.0,243.2 L910.0,247.9 L915.7,243.9 L920.7,235.5 L925.8,229.9 L930.8,230.5 L936.5,233.2 L942.5,230.5 L947.5,232.2 L952.5,242.2 L958.2,243.9 L963.6,236.5 L968.3,243.9 L974.3,250.6 L980.3,254.6 L985.4,260.7 L991.0,252.3 L996.1,243.9 L1001.8,246.6 L1007.1,240.6 L1011.8,244.6 L1017.8,256.6 L1022.8,252.3 L1027.9,241.2 L1033.6,238.9 L1038.6,255.6 L1043.9,259.0 L1049.6,250.6 L1055.3,255.6 L1060.7,264.7 L1066.4,267.3 L1072.1,264.0 L1077.4,255.6 L1082.4,257.3 L1087.5,265.7 L1093.2,248.9 L1098.2,231.2 L1103.9,236.5 L1109.2,236.5 L1114.9,226.5 L1119.9,222.2 L1125.6,222.2 L1131.0,228.8 L1136.7,233.9 L1142.4,226.5 L1147.7,226.5 L1153.4,230.5 L1158.4,215.5 L1164.1,226.5 L1168.5,249.9 L1174.5,252.3 L1180.2,243.2 L1185.2,242.2 L1191.2,244.6 L1196.9,243.9 L1202.0,238.9 L1207.0,232.2 L1212.7,236.5 L1218.0,246.6 L1223.0,249.9 L1228.1,238.9 L1233.8,243.2 L1239.5,248.9 L1244.8,243.2 L1249.8,239.9 L1254.9,246.6 L1260.5,247.9 L1265.6,247.9 L1271.6,245.6 L1276.6,243.9 L1282.3,247.3 L1287.3,235.5 L1293.0,233.2 L1298.0,241.2 L1303.4,228.8 L1309.1,226.5 L1314.1,237.2 L1319.8,237.2 L1325.8,236.5 L1330.9,238.9 L1336.5,243.2 L1341.9,247.9 L1347.6,247.9 L1352.6,243.9 L1357.6,236.5 L1363.3,236.5 L1368.7,242.2 L1374.4,246.6 L1379.4,249.9 L1385.1,246.6 L1390.4,243.9 L1396.1,254.6 L1401.2,260.7 L1406.8,247.9 L1412.2,238.9 L1417.2,247.9 L1422.9,247.9 L1427.9,228.8 L1433.6,230.5 L1439.0,238.9 L1444.7,248.9 L1444.7,340.3 L1439.0,332.6 L1433.6,329.3 L1427.9,330.3 L1422.9,337.7 L1417.2,337.0 L1412.2,331.6 L1406.8,335.0 L1401.2,339.3 L1396.1,337.7 L1390.4,332.6 L1385.1,332.6 L1379.4,335.0 L1374.4,337.0 L1368.7,331.6 L1363.3,329.3 L1357.6,329.3 L1352.6,331.6 L1347.6,338.3 L1341.9,339.3 L1336.5,331.0 L1330.9,329.3 L1325.8,331.0 L1319.8,325.9 L1314.1,325.9 L1309.1,320.9 L1303.4,326.9 L1298.0,335.0 L1293.0,329.3 L1287.3,330.3 L1282.3,331.0 L1276.6,331.0 L1271.6,338.3 L1265.6,337.7 L1260.5,335.0 L1254.9,331.0 L1249.8,329.3 L1244.8,332.6 L1239.5,337.7 L1233.8,331.0 L1228.1,329.3 L1223.0,337.0 L1218.0,341.0 L1212.7,335.0 L1207.0,325.9 L1202.0,327.6 L1196.9,326.9 L1191.2,326.9 L1185.2,328.3 L1180.2,331.6 L1174.5,332.6 L1168.5,328.3 L1164.1,318.2 L1158.4,307.5 L1153.4,314.9 L1147.7,318.2 L1142.4,320.9 L1136.7,322.6 L1131.0,314.9 L1125.6,312.5 L1119.9,315.9 L1114.9,315.9 L1109.2,318.2 L1103.9,322.6 L1098.2,324.3 L1093.2,335.0 L1087.5,351.0 L1082.4,351.7 L1077.4,346.0 L1072.1,347.0 L1066.4,353.7 L1060.7,359.4 L1055.3,357.1 L1049.6,347.0 L1043.9,341.7 L1038.6,341.0 L1033.6,331.0 L1027.9,325.9 L1022.8,339.3 L1017.8,346.0 L1011.8,337.0 L1007.1,327.6 L1001.8,330.3 L996.1,333.6 L991.0,338.3 L985.4,339.3 L980.3,339.3 L974.3,337.0 L968.3,331.0 L963.6,327.6 L958.2,331.6 L952.5,330.3 L947.5,321.6 L942.5,321.6 L936.5,329.3 L930.8,328.3 L925.8,323.6 L920.7,326.9 L915.7,332.6 L910.0,330.3 L904.0,330.3 L899.0,338.7 L893.3,338.7 L887.3,337.0 L882.2,337.0 L877.2,336.0 L871.2,335.0 L865.5,327.6 L860.5,322.6 L855.5,324.3 L849.8,337.0 L844.7,338.3 L838.7,335.0 L833.7,326.9 L828.7,326.9 L823.0,331.6 L817.0,331.6 L811.9,326.9 L806.2,321.6 L800.2,327.6Z" fill="url(#gpur)"/>
<path d="M800.2,327.6 L806.2,321.6 L811.9,326.9 L817.0,331.6 L823.0,331.6 L828.7,326.9 L833.7,326.9 L838.7,335.0 L844.7,338.3 L849.8,337.0 L855.5,324.3 L860.5,322.6 L865.5,327.6 L871.2,335.0 L877.2,336.0 L882.2,337.0 L887.3,337.0 L893.3,338.7 L899.0,338.7 L904.0,330.3 L910.0,330.3 L915.7,332.6 L920.7,326.9 L925.8,323.6 L930.8,328.3 L936.5,329.3 L942.5,321.6 L947.5,321.6 L952.5,330.3 L958.2,331.6 L963.6,327.6 L968.3,331.0 L974.3,337.0 L980.3,339.3 L985.4,339.3 L991.0,338.3 L996.1,333.6 L1001.8,330.3 L1007.1,327.6 L1011.8,337.0 L1017.8,346.0 L1022.8,339.3 L1027.9,325.9 L1033.6,331.0 L1038.6,341.0 L1043.9,341.7 L1049.6,347.0 L1055.3,357.1 L1060.7,359.4 L1066.4,353.7 L1072.1,347.0 L1077.4,346.0 L1082.4,351.7 L1087.5,351.0 L1093.2,335.0 L1098.2,324.3 L1103.9,322.6 L1109.2,318.2 L1114.9,315.9 L1119.9,315.9 L1125.6,312.5 L1131.0,314.9 L1136.7,322.6 L1142.4,320.9 L1147.7,318.2 L1153.4,314.9 L1158.4,307.5 L1164.1,318.2 L1168.5,328.3 L1174.5,332.6 L1180.2,331.6 L1185.2,328.3 L1191.2,326.9 L1196.9,326.9 L1202.0,327.6 L1207.0,325.9 L1212.7,335.0 L1218.0,341.0 L1223.0,337.0 L1228.1,329.3 L1233.8,331.0 L1239.5,337.7 L1244.8,332.6 L1249.8,329.3 L1254.9,331.0 L1260.5,335.0 L1265.6,337.7 L1271.6,338.3 L1276.6,331.0 L1282.3,331.0 L1287.3,330.3 L1293.0,329.3 L1298.0,335.0 L1303.4,326.9 L1309.1,320.9 L1314.1,325.9 L1319.8,325.9 L1325.8,331.0 L1330.9,329.3 L1336.5,331.0 L1341.9,339.3 L1347.6,338.3 L1352.6,331.6 L1357.6,329.3 L1363.3,329.3 L1368.7,331.6 L1374.4,337.0 L1379.4,335.0 L1385.1,332.6 L1390.4,332.6 L1396.1,337.7 L1401.2,339.3 L1406.8,335.0 L1412.2,331.6 L1417.2,337.0 L1422.9,337.7 L1427.9,330.3 L1433.6,329.3 L1439.0,332.6 L1444.7,340.3 L1444.7,392.0 L800.2,392.0Z" fill="url(#gblu)"/>
<path d="M800.2,228.8 L806.2,237.2 L811.9,242.2 L817.0,245.6 L823.0,249.9 L828.7,242.2 L833.7,234.5 L838.7,247.3 L844.7,248.9 L849.8,242.2 L855.5,237.9 L860.5,237.9 L865.5,242.2 L871.2,247.9 L877.2,244.6 L882.2,243.2 L887.3,247.3 L893.3,254.6 L899.0,248.9 L904.0,243.2 L910.0,247.9 L915.7,243.9 L920.7,235.5 L925.8,229.9 L930.8,230.5 L936.5,233.2 L942.5,230.5 L947.5,232.2 L952.5,242.2 L958.2,243.9 L963.6,236.5 L968.3,243.9 L974.3,250.6 L980.3,254.6 L985.4,260.7 L991.0,252.3 L996.1,243.9 L1001.8,246.6 L1007.1,240.6 L1011.8,244.6 L1017.8,256.6 L1022.8,252.3 L1027.9,241.2 L1033.6,238.9 L1038.6,255.6 L1043.9,259.0 L1049.6,250.6 L1055.3,255.6 L1060.7,264.7 L1066.4,267.3 L1072.1,264.0 L1077.4,255.6 L1082.4,257.3 L1087.5,265.7 L1093.2,248.9 L1098.2,231.2 L1103.9,236.5 L1109.2,236.5 L1114.9,226.5 L1119.9,222.2 L1125.6,222.2 L1131.0,228.8 L1136.7,233.9 L1142.4,226.5 L1147.7,226.5 L1153.4,230.5 L1158.4,215.5 L1164.1,226.5 L1168.5,249.9 L1174.5,252.3 L1180.2,243.2 L1185.2,242.2 L1191.2,244.6 L1196.9,243.9 L1202.0,238.9 L1207.0,232.2 L1212.7,236.5 L1218.0,246.6 L1223.0,249.9 L1228.1,238.9 L1233.8,243.2 L1239.5,248.9 L1244.8,243.2 L1249.8,239.9 L1254.9,246.6 L1260.5,247.9 L1265.6,247.9 L1271.6,245.6 L1276.6,243.9 L1282.3,247.3 L1287.3,235.5 L1293.0,233.2 L1298.0,241.2 L1303.4,228.8 L1309.1,226.5 L1314.1,237.2 L1319.8,237.2 L1325.8,236.5 L1330.9,238.9 L1336.5,243.2 L1341.9,247.9 L1347.6,247.9 L1352.6,243.9 L1357.6,236.5 L1363.3,236.5 L1368.7,242.2 L1374.4,246.6 L1379.4,249.9 L1385.1,246.6 L1390.4,243.9 L1396.1,254.6 L1401.2,260.7 L1406.8,247.9 L1412.2,238.9 L1417.2,247.9 L1422.9,247.9 L1427.9,228.8 L1433.6,230.5 L1439.0,238.9 L1444.7,248.9" fill="none" stroke="#b877d9" stroke-width="1.2" stroke-opacity="0.55"/>
<g fill="#c28ae0"><circle cx="800.2" cy="228.8" r="2.7"/><circle cx="806.2" cy="237.2" r="2.7"/><circle cx="811.9" cy="242.2" r="2.7"/><circle cx="817.0" cy="245.6" r="2.7"/><circle cx="823.0" cy="249.9" r="2.7"/><circle cx="828.7" cy="242.2" r="2.7"/><circle cx="833.7" cy="234.5" r="2.7"/><circle cx="838.7" cy="247.3" r="2.7"/><circle cx="844.7" cy="248.9" r="2.7"/><circle cx="849.8" cy="242.2" r="2.7"/><circle cx="855.5" cy="237.9" r="2.7"/><circle cx="860.5" cy="237.9" r="2.7"/><circle cx="865.5" cy="242.2" r="2.7"/><circle cx="871.2" cy="247.9" r="2.7"/><circle cx="877.2" cy="244.6" r="2.7"/><circle cx="882.2" cy="243.2" r="2.7"/><circle cx="887.3" cy="247.3" r="2.7"/><circle cx="893.3" cy="254.6" r="2.7"/><circle cx="899.0" cy="248.9" r="2.7"/><circle cx="904.0" cy="243.2" r="2.7"/><circle cx="910.0" cy="247.9" r="2.7"/><circle cx="915.7" cy="243.9" r="2.7"/><circle cx="920.7" cy="235.5" r="2.7"/><circle cx="925.8" cy="229.9" r="2.7"/><circle cx="930.8" cy="230.5" r="2.7"/><circle cx="936.5" cy="233.2" r="2.7"/><circle cx="942.5" cy="230.5" r="2.7"/><circle cx="947.5" cy="232.2" r="2.7"/><circle cx="952.5" cy="242.2" r="2.7"/><circle cx="958.2" cy="243.9" r="2.7"/><circle cx="963.6" cy="236.5" r="2.7"/><circle cx="968.3" cy="243.9" r="2.7"/><circle cx="974.3" cy="250.6" r="2.7"/><circle cx="980.3" cy="254.6" r="2.7"/><circle cx="985.4" cy="260.7" r="2.7"/><circle cx="991.0" cy="252.3" r="2.7"/><circle cx="996.1" cy="243.9" r="2.7"/><circle cx="1001.8" cy="246.6" r="2.7"/><circle cx="1007.1" cy="240.6" r="2.7"/><circle cx="1011.8" cy="244.6" r="2.7"/><circle cx="1017.8" cy="256.6" r="2.7"/><circle cx="1022.8" cy="252.3" r="2.7"/><circle cx="1027.9" cy="241.2" r="2.7"/><circle cx="1033.6" cy="238.9" r="2.7"/><circle cx="1038.6" cy="255.6" r="2.7"/><circle cx="1043.9" cy="259.0" r="2.7"/><circle cx="1049.6" cy="250.6" r="2.7"/><circle cx="1055.3" cy="255.6" r="2.7"/><circle cx="1060.7" cy="264.7" r="2.7"/><circle cx="1066.4" cy="267.3" r="2.7"/><circle cx="1072.1" cy="264.0" r="2.7"/><circle cx="1077.4" cy="255.6" r="2.7"/><circle cx="1082.4" cy="257.3" r="2.7"/><circle cx="1087.5" cy="265.7" r="2.7"/><circle cx="1093.2" cy="248.9" r="2.7"/><circle cx="1098.2" cy="231.2" r="2.7"/><circle cx="1103.9" cy="236.5" r="2.7"/><circle cx="1109.2" cy="236.5" r="2.7"/><circle cx="1114.9" cy="226.5" r="2.7"/><circle cx="1119.9" cy="222.2" r="2.7"/><circle cx="1125.6" cy="222.2" r="2.7"/><circle cx="1131.0" cy="228.8" r="2.7"/><circle cx="1136.7" cy="233.9" r="2.7"/><circle cx="1142.4" cy="226.5" r="2.7"/><circle cx="1147.7" cy="226.5" r="2.7"/><circle cx="1153.4" cy="230.5" r="2.7"/><circle cx="1158.4" cy="215.5" r="2.7"/><circle cx="1164.1" cy="226.5" r="2.7"/><circle cx="1168.5" cy="249.9" r="2.7"/><circle cx="1174.5" cy="252.3" r="2.7"/><circle cx="1180.2" cy="243.2" r="2.7"/><circle cx="1185.2" cy="242.2" r="2.7"/><circle cx="1191.2" cy="244.6" r="2.7"/><circle cx="1196.9" cy="243.9" r="2.7"/><circle cx="1202.0" cy="238.9" r="2.7"/><circle cx="1207.0" cy="232.2" r="2.7"/><circle cx="1212.7" cy="236.5" r="2.7"/><circle cx="1218.0" cy="246.6" r="2.7"/><circle cx="1223.0" cy="249.9" r="2.7"/><circle cx="1228.1" cy="238.9" r="2.7"/><circle cx="1233.8" cy="243.2" r="2.7"/><circle cx="1239.5" cy="248.9" r="2.7"/><circle cx="1244.8" cy="243.2" r="2.7"/><circle cx="1249.8" cy="239.9" r="2.7"/><circle cx="1254.9" cy="246.6" r="2.7"/><circle cx="1260.5" cy="247.9" r="2.7"/><circle cx="1265.6" cy="247.9" r="2.7"/><circle cx="1271.6" cy="245.6" r="2.7"/><circle cx="1276.6" cy="243.9" r="2.7"/><circle cx="1282.3" cy="247.3" r="2.7"/><circle cx="1287.3" cy="235.5" r="2.7"/><circle cx="1293.0" cy="233.2" r="2.7"/><circle cx="1298.0" cy="241.2" r="2.7"/><circle cx="1303.4" cy="228.8" r="2.7"/><circle cx="1309.1" cy="226.5" r="2.7"/><circle cx="1314.1" cy="237.2" r="2.7"/><circle cx="1319.8" cy="237.2" r="2.7"/><circle cx="1325.8" cy="236.5" r="2.7"/><circle cx="1330.9" cy="238.9" r="2.7"/><circle cx="1336.5" cy="243.2" r="2.7"/><circle cx="1341.9" cy="247.9" r="2.7"/><circle cx="1347.6" cy="247.9" r="2.7"/><circle cx="1352.6" cy="243.9" r="2.7"/><circle cx="1357.6" cy="236.5" r="2.7"/><circle cx="1363.3" cy="236.5" r="2.7"/><circle cx="1368.7" cy="242.2" r="2.7"/><circle cx="1374.4" cy="246.6" r="2.7"/><circle cx="1379.4" cy="249.9" r="2.7"/><circle cx="1385.1" cy="246.6" r="2.7"/><circle cx="1390.4" cy="243.9" r="2.7"/><circle cx="1396.1" cy="254.6" r="2.7"/><circle cx="1401.2" cy="260.7" r="2.7"/><circle cx="1406.8" cy="247.9" r="2.7"/><circle cx="1412.2" cy="238.9" r="2.7"/><circle cx="1417.2" cy="247.9" r="2.7"/><circle cx="1422.9" cy="247.9" r="2.7"/><circle cx="1427.9" cy="228.8" r="2.7"/><circle cx="1433.6" cy="230.5" r="2.7"/><circle cx="1439.0" cy="238.9" r="2.7"/><circle cx="1444.7" cy="248.9" r="2.7"/></g>
<path d="M800.2,327.6 L806.2,321.6 L811.9,326.9 L817.0,331.6 L823.0,331.6 L828.7,326.9 L833.7,326.9 L838.7,335.0 L844.7,338.3 L849.8,337.0 L855.5,324.3 L860.5,322.6 L865.5,327.6 L871.2,335.0 L877.2,336.0 L882.2,337.0 L887.3,337.0 L893.3,338.7 L899.0,338.7 L904.0,330.3 L910.0,330.3 L915.7,332.6 L920.7,326.9 L925.8,323.6 L930.8,328.3 L936.5,329.3 L942.5,321.6 L947.5,321.6 L952.5,330.3 L958.2,331.6 L963.6,327.6 L968.3,331.0 L974.3,337.0 L980.3,339.3 L985.4,339.3 L991.0,338.3 L996.1,333.6 L1001.8,330.3 L1007.1,327.6 L1011.8,337.0 L1017.8,346.0 L1022.8,339.3 L1027.9,325.9 L1033.6,331.0 L1038.6,341.0 L1043.9,341.7 L1049.6,347.0 L1055.3,357.1 L1060.7,359.4 L1066.4,353.7 L1072.1,347.0 L1077.4,346.0 L1082.4,351.7 L1087.5,351.0 L1093.2,335.0 L1098.2,324.3 L1103.9,322.6 L1109.2,318.2 L1114.9,315.9 L1119.9,315.9 L1125.6,312.5 L1131.0,314.9 L1136.7,322.6 L1142.4,320.9 L1147.7,318.2 L1153.4,314.9 L1158.4,307.5 L1164.1,318.2 L1168.5,328.3 L1174.5,332.6 L1180.2,331.6 L1185.2,328.3 L1191.2,326.9 L1196.9,326.9 L1202.0,327.6 L1207.0,325.9 L1212.7,335.0 L1218.0,341.0 L1223.0,337.0 L1228.1,329.3 L1233.8,331.0 L1239.5,337.7 L1244.8,332.6 L1249.8,329.3 L1254.9,331.0 L1260.5,335.0 L1265.6,337.7 L1271.6,338.3 L1276.6,331.0 L1282.3,331.0 L1287.3,330.3 L1293.0,329.3 L1298.0,335.0 L1303.4,326.9 L1309.1,320.9 L1314.1,325.9 L1319.8,325.9 L1325.8,331.0 L1330.9,329.3 L1336.5,331.0 L1341.9,339.3 L1347.6,338.3 L1352.6,331.6 L1357.6,329.3 L1363.3,329.3 L1368.7,331.6 L1374.4,337.0 L1379.4,335.0 L1385.1,332.6 L1390.4,332.6 L1396.1,337.7 L1401.2,339.3 L1406.8,335.0 L1412.2,331.6 L1417.2,337.0 L1422.9,337.7 L1427.9,330.3 L1433.6,329.3 L1439.0,332.6 L1444.7,340.3" fill="none" stroke="#5794f2" stroke-width="1.2" stroke-opacity="0.55"/>
<g fill="#6d9ff5"><circle cx="800.2" cy="327.6" r="2.7"/><circle cx="806.2" cy="321.6" r="2.7"/><circle cx="811.9" cy="326.9" r="2.7"/><circle cx="817.0" cy="331.6" r="2.7"/><circle cx="823.0" cy="331.6" r="2.7"/><circle cx="828.7" cy="326.9" r="2.7"/><circle cx="833.7" cy="326.9" r="2.7"/><circle cx="838.7" cy="335.0" r="2.7"/><circle cx="844.7" cy="338.3" r="2.7"/><circle cx="849.8" cy="337.0" r="2.7"/><circle cx="855.5" cy="324.3" r="2.7"/><circle cx="860.5" cy="322.6" r="2.7"/><circle cx="865.5" cy="327.6" r="2.7"/><circle cx="871.2" cy="335.0" r="2.7"/><circle cx="877.2" cy="336.0" r="2.7"/><circle cx="882.2" cy="337.0" r="2.7"/><circle cx="887.3" cy="337.0" r="2.7"/><circle cx="893.3" cy="338.7" r="2.7"/><circle cx="899.0" cy="338.7" r="2.7"/><circle cx="904.0" cy="330.3" r="2.7"/><circle cx="910.0" cy="330.3" r="2.7"/><circle cx="915.7" cy="332.6" r="2.7"/><circle cx="920.7" cy="326.9" r="2.7"/><circle cx="925.8" cy="323.6" r="2.7"/><circle cx="930.8" cy="328.3" r="2.7"/><circle cx="936.5" cy="329.3" r="2.7"/><circle cx="942.5" cy="321.6" r="2.7"/><circle cx="947.5" cy="321.6" r="2.7"/><circle cx="952.5" cy="330.3" r="2.7"/><circle cx="958.2" cy="331.6" r="2.7"/><circle cx="963.6" cy="327.6" r="2.7"/><circle cx="968.3" cy="331.0" r="2.7"/><circle cx="974.3" cy="337.0" r="2.7"/><circle cx="980.3" cy="339.3" r="2.7"/><circle cx="985.4" cy="339.3" r="2.7"/><circle cx="991.0" cy="338.3" r="2.7"/><circle cx="996.1" cy="333.6" r="2.7"/><circle cx="1001.8" cy="330.3" r="2.7"/><circle cx="1007.1" cy="327.6" r="2.7"/><circle cx="1011.8" cy="337.0" r="2.7"/><circle cx="1017.8" cy="346.0" r="2.7"/><circle cx="1022.8" cy="339.3" r="2.7"/><circle cx="1027.9" cy="325.9" r="2.7"/><circle cx="1033.6" cy="331.0" r="2.7"/><circle cx="1038.6" cy="341.0" r="2.7"/><circle cx="1043.9" cy="341.7" r="2.7"/><circle cx="1049.6" cy="347.0" r="2.7"/><circle cx="1055.3" cy="357.1" r="2.7"/><circle cx="1060.7" cy="359.4" r="2.7"/><circle cx="1066.4" cy="353.7" r="2.7"/><circle cx="1072.1" cy="347.0" r="2.7"/><circle cx="1077.4" cy="346.0" r="2.7"/><circle cx="1082.4" cy="351.7" r="2.7"/><circle cx="1087.5" cy="351.0" r="2.7"/><circle cx="1093.2" cy="335.0" r="2.7"/><circle cx="1098.2" cy="324.3" r="2.7"/><circle cx="1103.9" cy="322.6" r="2.7"/><circle cx="1109.2" cy="318.2" r="2.7"/><circle cx="1114.9" cy="315.9" r="2.7"/><circle cx="1119.9" cy="315.9" r="2.7"/><circle cx="1125.6" cy="312.5" r="2.7"/><circle cx="1131.0" cy="314.9" r="2.7"/><circle cx="1136.7" cy="322.6" r="2.7"/><circle cx="1142.4" cy="320.9" r="2.7"/><circle cx="1147.7" cy="318.2" r="2.7"/><circle cx="1153.4" cy="314.9" r="2.7"/><circle cx="1158.4" cy="307.5" r="2.7"/><circle cx="1164.1" cy="318.2" r="2.7"/><circle cx="1168.5" cy="328.3" r="2.7"/><circle cx="1174.5" cy="332.6" r="2.7"/><circle cx="1180.2" cy="331.6" r="2.7"/><circle cx="1185.2" cy="328.3" r="2.7"/><circle cx="1191.2" cy="326.9" r="2.7"/><circle cx="1196.9" cy="326.9" r="2.7"/><circle cx="1202.0" cy="327.6" r="2.7"/><circle cx="1207.0" cy="325.9" r="2.7"/><circle cx="1212.7" cy="335.0" r="2.7"/><circle cx="1218.0" cy="341.0" r="2.7"/><circle cx="1223.0" cy="337.0" r="2.7"/><circle cx="1228.1" cy="329.3" r="2.7"/><circle cx="1233.8" cy="331.0" r="2.7"/><circle cx="1239.5" cy="337.7" r="2.7"/><circle cx="1244.8" cy="332.6" r="2.7"/><circle cx="1249.8" cy="329.3" r="2.7"/><circle cx="1254.9" cy="331.0" r="2.7"/><circle cx="1260.5" cy="335.0" r="2.7"/><circle cx="1265.6" cy="337.7" r="2.7"/><circle cx="1271.6" cy="338.3" r="2.7"/><circle cx="1276.6" cy="331.0" r="2.7"/><circle cx="1282.3" cy="331.0" r="2.7"/><circle cx="1287.3" cy="330.3" r="2.7"/><circle cx="1293.0" cy="329.3" r="2.7"/><circle cx="1298.0" cy="335.0" r="2.7"/><circle cx="1303.4" cy="326.9" r="2.7"/><circle cx="1309.1" cy="320.9" r="2.7"/><circle cx="1314.1" cy="325.9" r="2.7"/><circle cx="1319.8" cy="325.9" r="2.7"/><circle cx="1325.8" cy="331.0" r="2.7"/><circle cx="1330.9" cy="329.3" r="2.7"/><circle cx="1336.5" cy="331.0" r="2.7"/><circle cx="1341.9" cy="339.3" r="2.7"/><circle cx="1347.6" cy="338.3" r="2.7"/><circle cx="1352.6" cy="331.6" r="2.7"/><circle cx="1357.6" cy="329.3" r="2.7"/><circle cx="1363.3" cy="329.3" r="2.7"/><circle cx="1368.7" cy="331.6" r="2.7"/><circle cx="1374.4" cy="337.0" r="2.7"/><circle cx="1379.4" cy="335.0" r="2.7"/><circle cx="1385.1" cy="332.6" r="2.7"/><circle cx="1390.4" cy="332.6" r="2.7"/><circle cx="1396.1" cy="337.7" r="2.7"/><circle cx="1401.2" cy="339.3" r="2.7"/><circle cx="1406.8" cy="335.0" r="2.7"/><circle cx="1412.2" cy="331.6" r="2.7"/><circle cx="1417.2" cy="337.0" r="2.7"/><circle cx="1422.9" cy="337.7" r="2.7"/><circle cx="1427.9" cy="330.3" r="2.7"/><circle cx="1433.6" cy="329.3" r="2.7"/><circle cx="1439.0" cy="332.6" r="2.7"/><circle cx="1444.7" cy="340.3" r="2.7"/></g>
<rect x="782" y="443" width="20" height="6" rx="3" fill="#5794f2"/>
<text x="820.0" y="451.5" font-size="16.5" fill="#dcdde6" text-anchor="start" font-weight="normal" >logins</text>
<rect x="886" y="443" width="21" height="6" rx="3" fill="#b877d9"/>
<text x="924.0" y="451.5" font-size="16.5" fill="#dcdde6" text-anchor="start" font-weight="normal" >logins (-1 hour)</text>
<rect x="1494.5" y="128.5" width="355" height="190" rx="2.5" fill="#191e26" stroke="#24242e" stroke-width="2"/>
<rect x="1862.5" y="128.5" width="355" height="190" rx="2.5" fill="#191e26" stroke="#24242e" stroke-width="2"/>
<text x="1505.4" y="156.4" font-size="18.5" fill="#dcdde8" text-anchor="start" font-weight="normal"  textLength="73" lengthAdjust="spacingAndGlyphs" stroke="#dcdde8" stroke-width="0.6">Memory</text>
<text x="1873.6" y="156.4" font-size="18.5" fill="#dcdde8" text-anchor="start" font-weight="normal"  textLength="102.5" lengthAdjust="spacingAndGlyphs" stroke="#dcdde8" stroke-width="0.6">Google hits</text>
<path d="M1590.37,299.36 A85.3,85.3 0 0 1 1723.43,205.33 L1721.24,208.18 A81.7,81.7 0 0 0 1593.80,298.25 Z" fill="#73bf69"/>
<path d="M1722.83,204.88 A85.3,85.3 0 0 1 1754.44,253.09 L1750.94,253.93 A81.7,81.7 0 0 0 1720.67,207.75 Z" fill="#ff9830"/>
<path d="M1754.27,252.36 A85.3,85.3 0 0 1 1752.63,299.36 L1749.20,298.25 A81.7,81.7 0 0 0 1750.77,253.23 Z" fill="#f2495c"/>
<path d="M1596.37,297.41 A79,79 0 1 1 1746.63,297.41 L1725.71,290.61 A57,57 0 1 0 1617.29,290.61 Z" fill="#23222b"/>
<path d="M1596.37,297.41 A79,79 0 0 1 1638.11,201.40 L1647.41,221.34 A57,57 0 0 0 1617.29,290.61 Z" fill="#73bf69"/>
<text x="1672.0" y="294.0" font-size="29.6" fill="#73bf69" text-anchor="middle" font-weight="normal"  textLength="73.7" lengthAdjust="spacingAndGlyphs" stroke="#73bf69" stroke-width="0.9">114 B</text>
<path d="M1960.78,296.74 A83.3,83.3 0 0 1 2083.52,199.98 L2081.64,203.04 A79.7,79.7 0 0 0 1964.20,295.63 Z" fill="#73bf69"/>
<path d="M2082.90,199.60 A83.3,83.3 0 0 1 2122.76,261.57 L2119.19,261.98 A79.7,79.7 0 0 0 2081.05,202.68 Z" fill="#ff9830"/>
<path d="M2122.68,260.85 A83.3,83.3 0 0 1 2119.22,296.74 L2115.80,295.63 A79.7,79.7 0 0 0 2119.11,261.29 Z" fill="#f2495c"/>
<path d="M1967.72,294.49 A76,76 0 1 1 2112.28,294.49 L2090.88,287.53 A53.5,53.5 0 1 0 1989.12,287.53 Z" fill="#23222b"/>
<path d="M1967.72,294.49 A76,76 0 0 1 1970.57,240.09 L1991.13,249.24 A53.5,53.5 0 0 0 1989.12,287.53 Z" fill="#73bf69"/>
<text x="2039.5" y="294.5" font-size="38.7" fill="#73bf69" text-anchor="middle" font-weight="normal"  textLength="62.3" lengthAdjust="spacingAndGlyphs" stroke="#73bf69" stroke-width="1.1">57.1</text>
<rect x="1494.5" y="331.5" width="355" height="139" rx="2.5" fill="#191e26" stroke="#24242e" stroke-width="2"/>
<rect x="1862.5" y="331.5" width="355" height="139" rx="2.5" fill="#191e26" stroke="#24242e" stroke-width="2"/>
<text x="1505.4" y="359.5" font-size="18.5" fill="#dcdde8" text-anchor="start" font-weight="normal"  textLength="119.5" lengthAdjust="spacingAndGlyphs" stroke="#dcdde8" stroke-width="0.6">Support calls</text>
<text x="1873.6" y="359.5" font-size="18.5" fill="#dcdde8" text-anchor="start" font-weight="normal"  textLength="77.4" lengthAdjust="spacingAndGlyphs" stroke="#dcdde8" stroke-width="0.6">Sign ups</text>
<path d="M1495.8,439.5 L1499.9,437.8 L1504.9,441.1 L1511.5,446.1 L1515.6,442.8 L1519.4,423.3 L1523.0,442.8 L1526.3,437.8 L1532.9,441.1 L1537.9,441.9 L1541.2,437.8 L1546.2,434.5 L1551.1,442.8 L1555.2,446.1 L1559.4,439.5 L1562.7,442.8 L1566.8,434.5 L1572.6,446.1 L1575.9,452.7 L1582.5,439.5 L1590.8,452.7 L1597.4,441.1 L1604.0,451.0 L1612.2,441.1 L1620.5,436.2 L1627.1,438.6 L1633.7,437.8 L1638.7,439.5 L1643.6,444.4 L1646.9,436.2 L1651.9,444.4 L1656.8,439.5 L1661.8,441.9 L1668.4,432.9 L1673.3,433.7 L1680.0,440.3 L1688.2,434.5 L1693.2,432.9 L1698.1,442.8 L1703.1,432.9 L1709.7,436.2 L1716.3,441.1 L1721.3,437.8 L1726.2,446.1 L1732.8,457.6 L1739.4,439.5 L1744.4,449.4 L1752.6,446.1 L1760.9,470.0 L1765.0,452.7 L1768.3,423.8 L1774.1,427.9 L1779.1,436.2 L1782.4,431.2 L1787.3,444.4 L1790.6,436.2 L1795.6,442.8 L1802.2,444.4 L1807.1,445.2 L1813.8,441.1 L1818.7,446.1 L1825.3,438.6 L1830.3,452.7 L1835.2,451.9 L1838.5,444.4 L1841.8,442.8 L1846.8,446.1 L1846.8,471.0 L1495.8,471.0Z" fill="#f2495c" fill-opacity="0.21"/>
<path d="M1495.8,439.5 L1499.9,437.8 L1504.9,441.1 L1511.5,446.1 L1515.6,442.8 L1519.4,423.3 L1523.0,442.8 L1526.3,437.8 L1532.9,441.1 L1537.9,441.9 L1541.2,437.8 L1546.2,434.5 L1551.1,442.8 L1555.2,446.1 L1559.4,439.5 L1562.7,442.8 L1566.8,434.5 L1572.6,446.1 L1575.9,452.7 L1582.5,439.5 L1590.8,452.7 L1597.4,441.1 L1604.0,451.0 L1612.2,441.1 L1620.5,436.2 L1627.1,438.6 L1633.7,437.8 L1638.7,439.5 L1643.6,444.4 L1646.9,436.2 L1651.9,444.4 L1656.8,439.5 L1661.8,441.9 L1668.4,432.9 L1673.3,433.7 L1680.0,440.3 L1688.2,434.5 L1693.2,432.9 L1698.1,442.8 L1703.1,432.9 L1709.7,436.2 L1716.3,441.1 L1721.3,437.8 L1726.2,446.1 L1732.8,457.6 L1739.4,439.5 L1744.4,449.4 L1752.6,446.1 L1760.9,470.0 L1765.0,452.7 L1768.3,423.8 L1774.1,427.9 L1779.1,436.2 L1782.4,431.2 L1787.3,444.4 L1790.6,436.2 L1795.6,442.8 L1802.2,444.4 L1807.1,445.2 L1813.8,441.1 L1818.7,446.1 L1825.3,438.6 L1830.3,452.7 L1835.2,451.9 L1838.5,444.4 L1841.8,442.8 L1846.8,446.1" fill="none" stroke="#e8394d" stroke-width="1.6" stroke-linejoin="round"/>
<path d="M1863.8,452.7 L1871.2,442.8 L1879.5,447.7 L1886.9,437.0 L1892.7,440.3 L1899.3,437.0 L1903.4,446.1 L1907.6,444.4 L1910.9,456.8 L1915.0,443.6 L1920.8,451.0 L1927.4,443.6 L1934.8,436.2 L1938.9,447.7 L1943.9,449.4 L1949.7,445.2 L1955.5,449.4 L1961.2,447.7 L1966.2,441.1 L1971.1,454.3 L1978.6,439.5 L1985.2,433.7 L1990.1,446.1 L1995.1,437.0 L2001.7,440.3 L2006.7,446.1 L2010.0,451.0 L2018.2,442.8 L2023.2,446.9 L2029.8,444.4 L2038.0,442.8 L2048.0,440.3 L2051.3,446.1 L2056.2,435.3 L2061.2,444.4 L2069.4,439.5 L2077.7,444.4 L2084.3,441.1 L2092.6,449.4 L2100.8,453.5 L2107.4,452.7 L2112.4,441.9 L2120.6,449.4 L2123.9,469.2 L2132.2,464.2 L2140.5,422.9 L2145.4,432.9 L2150.4,434.5 L2155.3,452.7 L2158.6,446.1 L2165.2,449.4 L2171.8,445.2 L2181.8,451.0 L2188.4,446.1 L2195.0,441.1 L2199.9,454.3 L2206.5,446.9 L2209.8,450.2 L2214.8,445.2 L2214.8,471.0 L1863.8,471.0Z" fill="#56a64b" fill-opacity="0.21"/>
<path d="M1863.8,452.7 L1871.2,442.8 L1879.5,447.7 L1886.9,437.0 L1892.7,440.3 L1899.3,437.0 L1903.4,446.1 L1907.6,444.4 L1910.9,456.8 L1915.0,443.6 L1920.8,451.0 L1927.4,443.6 L1934.8,436.2 L1938.9,447.7 L1943.9,449.4 L1949.7,445.2 L1955.5,449.4 L1961.2,447.7 L1966.2,441.1 L1971.1,454.3 L1978.6,439.5 L1985.2,433.7 L1990.1,446.1 L1995.1,437.0 L2001.7,440.3 L2006.7,446.1 L2010.0,451.0 L2018.2,442.8 L2023.2,446.9 L2029.8,444.4 L2038.0,442.8 L2048.0,440.3 L2051.3,446.1 L2056.2,435.3 L2061.2,444.4 L2069.4,439.5 L2077.7,444.4 L2084.3,441.1 L2092.6,449.4 L2100.8,453.5 L2107.4,452.7 L2112.4,441.9 L2120.6,449.4 L2123.9,469.2 L2132.2,464.2 L2140.5,422.9 L2145.4,432.9 L2150.4,434.5 L2155.3,452.7 L2158.6,446.1 L2165.2,449.4 L2171.8,445.2 L2181.8,451.0 L2188.4,446.1 L2195.0,441.1 L2199.9,454.3 L2206.5,446.9 L2209.8,450.2 L2214.8,445.2" fill="none" stroke="#52b24a" stroke-width="1.6" stroke-linejoin="round"/>
<text x="1672.1" y="433.0" font-size="29.5" fill="#f24450" text-anchor="middle" font-weight="normal"  textLength="65.2" lengthAdjust="spacingAndGlyphs" stroke="#f24450" stroke-width="0.8">84.9</text>
<text x="2039.3" y="433.5" font-size="30.6" fill="#5cbd52" text-anchor="middle" font-weight="normal"  textLength="57" lengthAdjust="spacingAndGlyphs" stroke="#5cbd52" stroke-width="0.8">283</text>
<rect x="22.5" y="483.5" width="1459" height="393" rx="2.5" fill="#191e26" stroke="#24242e" stroke-width="2"/>
<text x="751.7" y="511.5" font-size="18.5" fill="#dcdde8" text-anchor="middle" font-weight="normal"  textLength="139.4" lengthAdjust="spacingAndGlyphs" stroke="#dcdde8" stroke-width="0.6">server requests</text>
<path d="M71.3,615.7 L75.4,609.9 L79.4,607.4 L83.5,603.4 L87.5,600.8 L91.6,597.3 L95.6,598.1 L99.7,601.6 L103.7,606.6 L107.8,603.4 L111.8,599.9 L115.9,597.2 L119.9,596.3 L124.0,609.6 L128.0,616.0 L132.1,612.1 L136.1,609.1 L140.2,610.9 L144.2,615.3 L148.3,615.2 L152.3,614.5 L156.4,612.6 L160.4,611.9 L164.5,613.3 L168.5,614.3 L172.6,614.2 L176.6,611.4 L180.7,603.4 L184.7,604.9 L188.8,608.8 L192.8,611.6 L196.9,612.9 L200.9,615.1 L205.0,615.5 L209.0,614.1 L213.1,611.3 L217.1,609.9 L221.2,607.8 L225.2,605.9 L229.3,606.3 L233.3,607.4 L237.4,608.4 L241.4,602.1 L245.5,590.6 L249.5,581.5 L253.6,591.9 L257.6,610.8 L261.7,605.1 L265.7,603.1 L269.8,601.6 L273.8,602.2 L277.9,604.5 L281.9,606.2 L286.0,606.0 L290.0,604.2 L294.1,605.9 L298.1,604.0 L302.2,607.9 L306.2,613.7 L310.3,610.2 L314.3,605.3 L318.4,602.5 L322.4,604.0 L326.5,605.9 L330.5,609.8 L334.6,611.6 L338.6,615.2 L342.7,615.8 L346.8,614.5 L350.8,610.9 L354.9,609.3 L358.9,612.3 L363.0,616.5 L367.0,610.0 L371.1,604.4 L375.1,608.1 L379.2,610.5 L383.2,612.9 L387.3,613.0 L391.3,610.0 L395.4,607.3 L399.4,606.1 L403.5,611.2 L407.5,615.3 L411.6,611.9 L415.6,605.5 L419.7,604.2 L423.7,600.6 L427.8,599.6 L431.8,600.2 L435.9,604.4 L439.9,605.3 L444.0,607.4 L448.0,609.6 L452.1,612.9 L456.1,616.4 L460.2,617.7 L464.2,617.8 L468.3,616.2 L472.3,614.9 L476.4,611.4 L480.4,611.3 L484.5,611.4 L488.5,609.3 L492.6,609.7 L496.6,607.5 L500.7,604.8 L504.7,602.9 L508.8,609.2 L512.8,617.6 L516.9,619.7 L520.9,618.5 L525.0,615.3 L529.0,615.2 L533.1,615.3 L537.1,617.1 L541.2,616.6 L545.2,614.6 L549.3,609.9 L553.3,604.1 L557.4,606.6 L561.4,614.4 L565.5,621.5 L569.5,623.6 L573.6,624.1 L577.6,621.6 L581.7,614.4 L585.7,609.4 L589.8,604.2 L593.8,601.8 L597.9,605.2 L601.9,608.8 L606.0,608.4 L610.0,608.2 L614.1,605.2 L618.1,604.7 L622.2,602.6 L626.3,603.5 L630.3,603.4 L634.4,605.6 L638.4,604.7 L642.5,607.0 L646.5,607.0 L650.6,607.5 L654.6,606.4 L658.7,604.7 L662.7,604.4 L666.8,604.7 L670.8,603.9 L674.9,604.8 L678.9,606.9 L683.0,603.6 L687.0,602.6 L691.1,601.3 L695.1,605.6 L699.2,605.8 L703.2,605.5 L707.3,604.9 L711.3,605.4 L715.4,604.2 L719.4,607.1 L723.5,617.0 L727.5,616.6 L731.6,614.4 L735.6,612.1 L739.7,612.0 L743.7,610.8 L747.8,609.2 L751.8,609.3 L755.9,608.0 L759.9,606.4 L764.0,604.2 L768.0,602.9 L772.1,601.1 L776.1,601.7 L780.2,600.3 L784.2,602.0 L788.3,602.9 L792.3,605.6 L796.4,604.3 L800.4,604.4 L804.5,603.1 L808.5,601.1 L812.6,600.7 L816.6,603.2 L820.7,603.6 L824.7,601.9 L828.8,602.0 L832.8,600.2 L836.9,600.0 L840.9,602.3 L845.0,603.0 L849.0,602.0 L853.1,600.2 L857.1,602.0 L861.2,602.2 L865.2,603.8 L869.3,605.2 L873.3,606.7 L877.4,605.4 L881.4,605.6 L885.5,604.4 L889.5,604.6 L893.6,604.7 L897.7,600.6 L901.7,597.6 L905.8,594.2 L909.8,594.4 L913.9,595.4 L917.9,596.2 L922.0,599.7 L926.0,603.1 L930.1,608.1 L934.1,609.8 L938.2,607.4 L942.2,604.0 L946.3,602.0 L950.3,601.9 L954.4,602.7 L958.4,602.2 L962.5,604.7 L966.5,605.1 L970.6,605.2 L974.6,604.5 L978.7,602.0 L982.7,608.4 L986.8,609.0 L990.8,605.9 L994.9,604.5 L998.9,607.4 L1003.0,606.3 L1007.0,599.8 L1011.1,602.0 L1015.1,611.8 L1019.2,617.2 L1023.2,619.3 L1027.3,610.1 L1031.3,601.9 L1035.4,604.5 L1039.4,610.8 L1043.5,615.8 L1047.5,621.8 L1051.6,618.5 L1055.6,615.5 L1059.7,614.9 L1063.7,612.3 L1067.8,613.2 L1071.8,614.5 L1075.9,616.2 L1079.9,616.0 L1084.0,615.6 L1088.0,613.9 L1092.1,609.9 L1096.1,607.5 L1100.2,611.4 L1104.2,615.9 L1108.3,612.6 L1112.3,608.7 L1116.4,612.3 L1120.4,616.1 L1124.5,615.6 L1128.5,611.9 L1132.6,611.3 L1136.6,616.6 L1140.7,622.4 L1144.7,618.6 L1148.8,612.9 L1152.8,607.2 L1156.9,615.6 L1160.9,623.8 L1165.0,636.0 L1169.0,646.4 L1173.1,651.8 L1177.2,648.4 L1181.2,642.1 L1185.3,638.4 L1189.3,635.7 L1193.4,631.8 L1197.4,624.9 L1201.5,608.2 L1205.5,595.2 L1209.6,585.2 L1213.6,583.9 L1217.7,584.3 L1221.7,583.4 L1225.8,583.0 L1229.8,584.2 L1233.9,585.2 L1237.9,586.1 L1242.0,586.1 L1246.0,590.5 L1250.1,592.6 L1254.1,603.6 L1258.2,603.7 L1262.2,599.3 L1266.3,596.4 L1270.3,594.1 L1274.4,600.2 L1278.4,607.9 L1282.5,614.2 L1286.5,619.9 L1290.6,619.2 L1294.6,613.0 L1298.7,608.8 L1302.7,608.8 L1306.8,608.3 L1310.8,609.2 L1314.9,610.3 L1318.9,613.0 L1323.0,616.8 L1327.0,615.7 L1331.1,614.8 L1335.1,612.0 L1339.2,612.2 L1343.2,612.0 L1347.3,608.3 L1351.3,606.1 L1355.4,601.6 L1359.4,603.9 L1363.5,608.9 L1367.5,612.4 L1371.6,612.6 L1375.6,614.9 L1379.7,614.4 L1383.7,613.3 L1387.8,610.2 L1391.8,612.7 L1395.9,621.5 L1399.9,618.8 L1404.0,614.1 L1408.0,615.0 L1412.1,617.3 L1416.1,618.8 L1420.2,614.8 L1424.2,611.9 L1428.3,613.8 L1432.3,611.9 L1436.4,606.3 L1440.4,603.5 L1444.5,607.4 L1444.5,797.5 L71.3,797.5Z" fill="#1c3d65"/>
<path d="M71.3,662.8 L75.4,658.9 L79.4,653.5 L83.5,652.0 L87.5,650.2 L91.6,647.8 L95.6,646.6 L99.7,649.4 L103.7,652.6 L107.8,652.5 L111.8,651.7 L115.9,650.9 L119.9,650.8 L124.0,659.8 L128.0,671.1 L132.1,660.6 L136.1,656.0 L140.2,656.2 L144.2,659.6 L148.3,661.1 L152.3,661.7 L156.4,661.6 L160.4,660.8 L164.5,659.8 L168.5,658.1 L172.6,656.4 L176.6,654.0 L180.7,654.1 L184.7,655.3 L188.8,653.9 L192.8,656.0 L196.9,656.3 L200.9,658.0 L205.0,659.1 L209.0,659.4 L213.1,657.6 L217.1,657.5 L221.2,656.8 L225.2,656.6 L229.3,655.7 L233.3,654.9 L237.4,654.0 L241.4,648.6 L245.5,639.5 L249.5,631.1 L253.6,643.4 L257.6,658.6 L261.7,653.8 L265.7,650.8 L269.8,647.5 L273.8,649.4 L277.9,652.7 L281.9,653.5 L286.0,655.5 L290.0,654.1 L294.1,651.1 L298.1,652.3 L302.2,657.6 L306.2,662.3 L310.3,661.0 L314.3,657.3 L318.4,653.1 L322.4,654.6 L326.5,656.9 L330.5,659.8 L334.6,660.4 L338.6,662.4 L342.7,665.2 L346.8,663.1 L350.8,656.5 L354.9,651.4 L358.9,656.1 L363.0,662.7 L367.0,656.2 L371.1,649.8 L375.1,653.6 L379.2,658.3 L383.2,662.2 L387.3,661.2 L391.3,659.0 L395.4,655.1 L399.4,654.0 L403.5,658.5 L407.5,662.4 L411.6,658.2 L415.6,654.2 L419.7,651.4 L423.7,649.8 L427.8,645.8 L431.8,649.5 L435.9,652.9 L439.9,655.1 L444.0,657.2 L448.0,660.1 L452.1,660.9 L456.1,661.6 L460.2,662.7 L464.2,664.7 L468.3,659.8 L472.3,657.5 L476.4,659.9 L480.4,662.5 L484.5,660.6 L488.5,656.3 L492.6,656.4 L496.6,657.2 L500.7,657.1 L504.7,658.6 L508.8,659.5 L512.8,664.8 L516.9,668.6 L520.9,665.3 L525.0,662.0 L529.0,660.5 L533.1,663.9 L537.1,667.0 L541.2,668.3 L545.2,662.4 L549.3,656.1 L553.3,649.0 L557.4,651.0 L561.4,659.1 L565.5,664.1 L569.5,667.7 L573.6,670.1 L577.6,667.1 L581.7,662.6 L585.7,656.1 L589.8,653.3 L593.8,650.5 L597.9,653.1 L601.9,656.3 L606.0,654.7 L610.0,650.9 L614.1,653.6 L618.1,656.0 L622.2,653.2 L626.3,649.8 L630.3,651.3 L634.4,652.8 L638.4,654.0 L642.5,654.0 L646.5,652.9 L650.6,652.6 L654.6,653.4 L658.7,652.2 L662.7,652.8 L666.8,656.5 L670.8,657.2 L674.9,655.2 L678.9,651.5 L683.0,650.8 L687.0,649.2 L691.1,649.3 L695.1,653.6 L699.2,654.4 L703.2,651.0 L707.3,651.2 L711.3,652.5 L715.4,656.5 L719.4,662.9 L723.5,668.0 L727.5,666.9 L731.6,663.1 L735.6,659.3 L739.7,657.8 L743.7,656.5 L747.8,654.5 L751.8,653.0 L755.9,652.6 L759.9,656.5 L764.0,658.0 L768.0,653.7 L772.1,653.4 L776.1,652.1 L780.2,652.1 L784.2,653.4 L788.3,653.1 L792.3,654.2 L796.4,653.3 L800.4,653.1 L804.5,653.0 L808.5,651.2 L812.6,650.5 L816.6,650.5 L820.7,649.2 L824.7,648.5 L828.8,648.2 L832.8,649.3 L836.9,652.3 L840.9,654.8 L845.0,658.9 L849.0,655.6 L853.1,652.5 L857.1,651.1 L861.2,653.0 L865.2,653.6 L869.3,656.0 L873.3,656.2 L877.4,659.8 L881.4,656.3 L885.5,653.1 L889.5,650.6 L893.6,646.7 L897.7,645.2 L901.7,643.9 L905.8,644.6 L909.8,644.4 L913.9,645.5 L917.9,645.5 L922.0,650.4 L926.0,654.0 L930.1,655.7 L934.1,659.1 L938.2,659.9 L942.2,656.4 L946.3,651.2 L950.3,648.2 L954.4,651.0 L958.4,652.2 L962.5,652.2 L966.5,650.9 L970.6,650.8 L974.6,652.2 L978.7,654.7 L982.7,657.1 L986.8,656.8 L990.8,654.1 L994.9,652.4 L998.9,656.6 L1003.0,655.0 L1007.0,649.9 L1011.1,648.6 L1015.1,655.5 L1019.2,661.1 L1023.2,656.1 L1027.3,650.3 L1031.3,646.0 L1035.4,652.4 L1039.4,658.7 L1043.5,665.7 L1047.5,667.5 L1051.6,664.5 L1055.6,662.2 L1059.7,657.2 L1063.7,654.8 L1067.8,656.9 L1071.8,662.0 L1075.9,664.2 L1079.9,660.7 L1084.0,659.5 L1088.0,658.0 L1092.1,654.3 L1096.1,657.5 L1100.2,659.5 L1104.2,660.5 L1108.3,657.2 L1112.3,657.1 L1116.4,658.7 L1120.4,663.1 L1124.5,662.0 L1128.5,660.5 L1132.6,658.0 L1136.6,660.8 L1140.7,667.1 L1144.7,668.7 L1148.8,662.5 L1152.8,656.5 L1156.9,658.9 L1160.9,666.5 L1165.0,675.8 L1169.0,685.3 L1173.1,687.6 L1177.2,686.6 L1181.2,681.3 L1185.3,678.7 L1189.3,684.2 L1193.4,684.8 L1197.4,674.4 L1201.5,663.7 L1205.5,653.0 L1209.6,643.0 L1213.6,638.0 L1217.7,637.3 L1221.7,638.7 L1225.8,638.9 L1229.8,636.7 L1233.9,636.7 L1237.9,637.0 L1242.0,639.2 L1246.0,640.4 L1250.1,645.0 L1254.1,652.2 L1258.2,654.6 L1262.2,650.2 L1266.3,644.8 L1270.3,645.7 L1274.4,650.0 L1278.4,655.9 L1282.5,663.1 L1286.5,662.5 L1290.6,659.3 L1294.6,658.6 L1298.7,657.5 L1302.7,656.4 L1306.8,656.4 L1310.8,656.6 L1314.9,658.7 L1318.9,662.2 L1323.0,663.1 L1327.0,662.1 L1331.1,657.7 L1335.1,655.0 L1339.2,654.0 L1343.2,654.9 L1347.3,653.7 L1351.3,652.4 L1355.4,654.8 L1359.4,659.1 L1363.5,660.4 L1367.5,663.0 L1371.6,662.8 L1375.6,665.2 L1379.7,659.3 L1383.7,656.1 L1387.8,654.0 L1391.8,660.4 L1395.9,666.0 L1399.9,664.8 L1404.0,658.8 L1408.0,657.8 L1412.1,661.3 L1416.1,661.9 L1420.2,661.1 L1424.2,660.0 L1428.3,657.9 L1432.3,655.8 L1436.4,652.7 L1440.4,653.9 L1444.5,658.1 L1444.5,797.5 L71.3,797.5Z" fill="#285b94"/>
<path d="M71.3,707.8 L75.4,704.8 L79.4,700.7 L83.5,701.2 L87.5,700.6 L91.6,699.5 L95.6,699.8 L99.7,699.9 L103.7,703.5 L107.8,701.7 L111.8,702.2 L115.9,702.4 L119.9,702.0 L124.0,705.6 L128.0,710.9 L132.1,707.3 L136.1,702.3 L140.2,704.3 L144.2,704.6 L148.3,704.9 L152.3,707.0 L156.4,706.7 L160.4,707.4 L164.5,706.6 L168.5,704.5 L172.6,703.0 L176.6,702.8 L180.7,702.6 L184.7,703.1 L188.8,701.6 L192.8,702.6 L196.9,703.5 L200.9,705.9 L205.0,707.3 L209.0,707.0 L213.1,703.6 L217.1,700.8 L221.2,700.4 L225.2,698.7 L229.3,700.9 L233.3,701.6 L237.4,703.6 L241.4,699.8 L245.5,695.9 L249.5,691.0 L253.6,695.9 L257.6,699.9 L261.7,704.9 L265.7,699.9 L269.8,694.5 L273.8,696.1 L277.9,699.9 L281.9,704.2 L286.0,703.8 L290.0,702.2 L294.1,699.5 L298.1,701.0 L302.2,705.3 L306.2,706.8 L310.3,705.4 L314.3,703.5 L318.4,699.6 L322.4,702.3 L326.5,702.9 L330.5,704.1 L334.6,706.8 L338.6,707.5 L342.7,712.2 L346.8,708.1 L350.8,703.9 L354.9,701.5 L358.9,705.4 L363.0,709.8 L367.0,702.9 L371.1,699.4 L375.1,700.7 L379.2,703.1 L383.2,703.5 L387.3,705.7 L391.3,704.2 L395.4,703.0 L399.4,702.5 L403.5,704.8 L407.5,705.7 L411.6,702.4 L415.6,698.4 L419.7,705.5 L423.7,702.8 L427.8,699.1 L431.8,699.6 L435.9,702.4 L439.9,703.4 L444.0,705.4 L448.0,707.0 L452.1,708.1 L456.1,708.1 L460.2,708.1 L464.2,707.3 L468.3,704.8 L472.3,701.8 L476.4,706.9 L480.4,708.2 L484.5,706.4 L488.5,702.2 L492.6,702.9 L496.6,704.2 L500.7,703.7 L504.7,703.5 L508.8,705.6 L512.8,708.4 L516.9,711.1 L520.9,708.1 L525.0,705.6 L529.0,704.5 L533.1,708.9 L537.1,710.4 L541.2,707.5 L545.2,703.9 L549.3,700.0 L553.3,696.7 L557.4,698.8 L561.4,704.3 L565.5,707.5 L569.5,712.6 L573.6,711.8 L577.6,710.2 L581.7,706.7 L585.7,703.7 L589.8,700.3 L593.8,699.6 L597.9,700.1 L601.9,703.8 L606.0,699.8 L610.0,699.0 L614.1,700.5 L618.1,700.5 L622.2,700.0 L626.3,698.1 L630.3,699.8 L634.4,700.7 L638.4,702.8 L642.5,704.5 L646.5,702.1 L650.6,700.9 L654.6,700.3 L658.7,698.8 L662.7,701.4 L666.8,704.2 L670.8,704.3 L674.9,702.5 L678.9,701.7 L683.0,700.9 L687.0,698.8 L691.1,697.3 L695.1,703.1 L699.2,703.8 L703.2,699.8 L707.3,699.4 L711.3,700.8 L715.4,702.3 L719.4,705.8 L723.5,713.5 L727.5,711.0 L731.6,709.1 L735.6,707.1 L739.7,705.3 L743.7,705.5 L747.8,702.8 L751.8,702.1 L755.9,701.3 L759.9,703.1 L764.0,700.6 L768.0,699.7 L772.1,699.1 L776.1,699.8 L780.2,700.4 L784.2,700.3 L788.3,700.3 L792.3,701.2 L796.4,704.0 L800.4,702.1 L804.5,702.9 L808.5,702.6 L812.6,702.4 L816.6,699.6 L820.7,698.4 L824.7,696.2 L828.8,698.6 L832.8,700.9 L836.9,701.6 L840.9,705.8 L845.0,707.0 L849.0,702.5 L853.1,699.7 L857.1,700.0 L861.2,701.4 L865.2,702.8 L869.3,705.8 L873.3,708.0 L877.4,707.1 L881.4,702.8 L885.5,699.6 L889.5,698.6 L893.6,695.6 L897.7,693.8 L901.7,692.8 L905.8,693.4 L909.8,696.2 L913.9,697.5 L917.9,698.1 L922.0,699.7 L926.0,701.3 L930.1,703.4 L934.1,704.7 L938.2,703.8 L942.2,702.4 L946.3,699.8 L950.3,698.0 L954.4,700.1 L958.4,699.0 L962.5,699.9 L966.5,700.6 L970.6,701.3 L974.6,699.6 L978.7,697.9 L982.7,701.6 L986.8,708.5 L990.8,704.5 L994.9,702.4 L998.9,700.6 L1003.0,699.6 L1007.0,697.9 L1011.1,699.8 L1015.1,706.3 L1019.2,706.4 L1023.2,704.6 L1027.3,701.5 L1031.3,698.9 L1035.4,701.4 L1039.4,707.5 L1043.5,711.2 L1047.5,708.7 L1051.6,706.7 L1055.6,705.1 L1059.7,703.5 L1063.7,702.7 L1067.8,702.6 L1071.8,703.7 L1075.9,705.9 L1079.9,704.2 L1084.0,701.8 L1088.0,700.8 L1092.1,700.5 L1096.1,703.7 L1100.2,707.6 L1104.2,709.1 L1108.3,706.6 L1112.3,704.0 L1116.4,703.5 L1120.4,703.2 L1124.5,702.9 L1128.5,701.9 L1132.6,703.1 L1136.6,708.4 L1140.7,714.8 L1144.7,709.7 L1148.8,705.2 L1152.8,701.9 L1156.9,710.9 L1160.9,717.4 L1165.0,722.0 L1169.0,725.0 L1173.1,724.9 L1177.2,721.6 L1181.2,719.3 L1185.3,715.7 L1189.3,718.3 L1193.4,720.4 L1197.4,713.1 L1201.5,705.4 L1205.5,698.6 L1209.6,694.8 L1213.6,690.2 L1217.7,687.8 L1221.7,688.3 L1225.8,688.3 L1229.8,688.4 L1233.9,691.5 L1237.9,688.8 L1242.0,689.7 L1246.0,692.4 L1250.1,697.4 L1254.1,700.3 L1258.2,700.9 L1262.2,698.3 L1266.3,695.3 L1270.3,695.8 L1274.4,699.4 L1278.4,704.4 L1282.5,707.2 L1286.5,709.3 L1290.6,706.5 L1294.6,706.5 L1298.7,705.3 L1302.7,704.4 L1306.8,703.3 L1310.8,704.0 L1314.9,704.7 L1318.9,707.6 L1323.0,707.4 L1327.0,705.8 L1331.1,705.6 L1335.1,705.0 L1339.2,704.9 L1343.2,703.0 L1347.3,699.1 L1351.3,699.1 L1355.4,699.4 L1359.4,701.7 L1363.5,703.6 L1367.5,705.3 L1371.6,708.1 L1375.6,709.0 L1379.7,705.4 L1383.7,703.9 L1387.8,703.4 L1391.8,707.5 L1395.9,710.2 L1399.9,707.3 L1404.0,703.9 L1408.0,704.6 L1412.1,707.1 L1416.1,709.7 L1420.2,708.6 L1424.2,704.3 L1428.3,703.9 L1432.3,702.1 L1436.4,701.0 L1440.4,703.8 L1444.5,707.1 L1444.5,797.5 L71.3,797.5Z" fill="#406790"/>
<path d="M71.3,751.6 L75.4,749.6 L79.4,747.6 L83.5,747.7 L87.5,746.9 L91.6,747.1 L95.6,746.1 L99.7,748.8 L103.7,751.7 L107.8,750.7 L111.8,750.8 L115.9,748.4 L119.9,748.9 L124.0,749.9 L128.0,751.6 L132.1,750.4 L136.1,747.8 L140.2,747.1 L144.2,746.1 L148.3,748.2 L152.3,750.2 L156.4,750.9 L160.4,752.2 L164.5,750.4 L168.5,751.4 L172.6,750.0 L176.6,749.5 L180.7,751.3 L184.7,749.5 L188.8,749.2 L192.8,751.8 L196.9,752.9 L200.9,752.8 L205.0,753.7 L209.0,751.3 L213.1,750.3 L217.1,747.8 L221.2,748.3 L225.2,746.5 L229.3,747.7 L233.3,748.1 L237.4,747.3 L241.4,746.2 L245.5,743.9 L249.5,744.6 L253.6,746.6 L257.6,749.3 L261.7,751.7 L265.7,747.2 L269.8,746.6 L273.8,746.8 L277.9,747.7 L281.9,750.0 L286.0,749.9 L290.0,749.8 L294.1,750.6 L298.1,751.4 L302.2,750.2 L306.2,752.8 L310.3,749.3 L314.3,749.4 L318.4,747.9 L322.4,746.5 L326.5,749.3 L330.5,749.1 L334.6,751.0 L338.6,751.3 L342.7,753.1 L346.8,752.6 L350.8,752.7 L354.9,749.2 L358.9,750.1 L363.0,750.2 L367.0,749.9 L371.1,749.2 L375.1,749.9 L379.2,751.0 L383.2,752.2 L387.3,749.6 L391.3,749.6 L395.4,750.6 L399.4,751.9 L403.5,751.1 L407.5,752.8 L411.6,749.1 L415.6,748.8 L419.7,751.1 L423.7,753.5 L427.8,752.3 L431.8,753.7 L435.9,752.8 L439.9,752.2 L444.0,752.2 L448.0,752.1 L452.1,753.0 L456.1,754.4 L460.2,756.8 L464.2,755.6 L468.3,751.3 L472.3,748.7 L476.4,751.3 L480.4,750.6 L484.5,750.5 L488.5,749.6 L492.6,750.1 L496.6,750.8 L500.7,750.1 L504.7,750.2 L508.8,749.6 L512.8,753.3 L516.9,753.2 L520.9,752.2 L525.0,751.9 L529.0,751.3 L533.1,753.9 L537.1,755.6 L541.2,753.0 L545.2,751.3 L549.3,747.7 L553.3,747.2 L557.4,749.2 L561.4,753.6 L565.5,754.2 L569.5,754.9 L573.6,756.6 L577.6,755.5 L581.7,754.0 L585.7,751.0 L589.8,749.3 L593.8,748.4 L597.9,747.5 L601.9,746.7 L606.0,746.7 L610.0,747.6 L614.1,749.8 L618.1,752.8 L622.2,751.7 L626.3,750.1 L630.3,750.1 L634.4,750.0 L638.4,749.6 L642.5,750.0 L646.5,750.6 L650.6,750.2 L654.6,748.4 L658.7,748.8 L662.7,749.6 L666.8,751.0 L670.8,751.7 L674.9,750.4 L678.9,748.4 L683.0,748.9 L687.0,747.5 L691.1,749.0 L695.1,751.7 L699.2,752.7 L703.2,749.2 L707.3,749.4 L711.3,750.2 L715.4,751.6 L719.4,751.7 L723.5,754.0 L727.5,753.8 L731.6,754.4 L735.6,752.9 L739.7,752.7 L743.7,751.3 L747.8,750.6 L751.8,748.8 L755.9,748.7 L759.9,748.2 L764.0,747.7 L768.0,746.2 L772.1,747.0 L776.1,747.0 L780.2,747.1 L784.2,748.3 L788.3,748.7 L792.3,748.2 L796.4,748.9 L800.4,748.8 L804.5,751.0 L808.5,752.0 L812.6,751.5 L816.6,750.3 L820.7,748.0 L824.7,745.7 L828.8,745.3 L832.8,747.9 L836.9,748.6 L840.9,751.8 L845.0,753.9 L849.0,752.1 L853.1,750.1 L857.1,747.5 L861.2,749.3 L865.2,749.7 L869.3,750.4 L873.3,750.2 L877.4,749.9 L881.4,748.0 L885.5,748.3 L889.5,747.4 L893.6,745.7 L897.7,746.5 L901.7,745.7 L905.8,745.1 L909.8,745.2 L913.9,745.9 L917.9,746.2 L922.0,746.8 L926.0,747.3 L930.1,750.0 L934.1,751.4 L938.2,751.2 L942.2,750.4 L946.3,748.8 L950.3,749.9 L954.4,748.0 L958.4,749.2 L962.5,749.2 L966.5,748.8 L970.6,747.2 L974.6,748.1 L978.7,748.3 L982.7,750.6 L986.8,751.3 L990.8,747.6 L994.9,747.3 L998.9,747.5 L1003.0,748.9 L1007.0,750.5 L1011.1,751.6 L1015.1,752.7 L1019.2,753.1 L1023.2,750.7 L1027.3,748.0 L1031.3,746.8 L1035.4,750.3 L1039.4,752.7 L1043.5,754.0 L1047.5,754.2 L1051.6,753.5 L1055.6,753.1 L1059.7,754.2 L1063.7,750.5 L1067.8,749.2 L1071.8,748.7 L1075.9,747.3 L1079.9,745.8 L1084.0,746.7 L1088.0,747.1 L1092.1,745.9 L1096.1,747.4 L1100.2,748.2 L1104.2,749.6 L1108.3,752.0 L1112.3,751.4 L1116.4,753.6 L1120.4,754.3 L1124.5,752.9 L1128.5,750.4 L1132.6,750.4 L1136.6,752.2 L1140.7,756.5 L1144.7,754.0 L1148.8,751.9 L1152.8,750.4 L1156.9,753.1 L1160.9,756.8 L1165.0,759.3 L1169.0,763.9 L1173.1,765.2 L1177.2,762.2 L1181.2,760.7 L1185.3,759.9 L1189.3,759.4 L1193.4,758.1 L1197.4,751.4 L1201.5,747.7 L1205.5,745.9 L1209.6,743.2 L1213.6,741.8 L1217.7,740.9 L1221.7,742.4 L1225.8,742.2 L1229.8,744.6 L1233.9,743.6 L1237.9,741.8 L1242.0,739.5 L1246.0,744.7 L1250.1,748.2 L1254.1,750.1 L1258.2,748.7 L1262.2,748.9 L1266.3,748.4 L1270.3,748.4 L1274.4,748.9 L1278.4,750.9 L1282.5,753.7 L1286.5,753.5 L1290.6,751.1 L1294.6,748.8 L1298.7,749.6 L1302.7,750.4 L1306.8,751.9 L1310.8,752.6 L1314.9,752.5 L1318.9,752.0 L1323.0,753.8 L1327.0,751.5 L1331.1,750.4 L1335.1,749.3 L1339.2,748.3 L1343.2,747.0 L1347.3,747.2 L1351.3,746.5 L1355.4,747.7 L1359.4,750.0 L1363.5,749.8 L1367.5,751.7 L1371.6,754.7 L1375.6,752.7 L1379.7,753.1 L1383.7,751.3 L1387.8,749.8 L1391.8,750.1 L1395.9,752.0 L1399.9,752.9 L1404.0,751.6 L1408.0,752.9 L1412.1,753.6 L1416.1,753.2 L1420.2,752.1 L1424.2,751.0 L1428.3,751.4 L1432.3,751.3 L1436.4,748.8 L1440.4,751.1 L1444.5,754.4 L1444.5,797.5 L71.3,797.5Z" fill="#7b8f99"/>
<path d="M71.3,615.7 L75.4,609.9 L79.4,607.4 L83.5,603.4 L87.5,600.8 L91.6,597.3 L95.6,598.1 L99.7,601.6 L103.7,606.6 L107.8,603.4 L111.8,599.9 L115.9,597.2 L119.9,596.3 L124.0,609.6 L128.0,616.0 L132.1,612.1 L136.1,609.1 L140.2,610.9 L144.2,615.3 L148.3,615.2 L152.3,614.5 L156.4,612.6 L160.4,611.9 L164.5,613.3 L168.5,614.3 L172.6,614.2 L176.6,611.4 L180.7,603.4 L184.7,604.9 L188.8,608.8 L192.8,611.6 L196.9,612.9 L200.9,615.1 L205.0,615.5 L209.0,614.1 L213.1,611.3 L217.1,609.9 L221.2,607.8 L225.2,605.9 L229.3,606.3 L233.3,607.4 L237.4,608.4 L241.4,602.1 L245.5,590.6 L249.5,581.5 L253.6,591.9 L257.6,610.8 L261.7,605.1 L265.7,603.1 L269.8,601.6 L273.8,602.2 L277.9,604.5 L281.9,606.2 L286.0,606.0 L290.0,604.2 L294.1,605.9 L298.1,604.0 L302.2,607.9 L306.2,613.7 L310.3,610.2 L314.3,605.3 L318.4,602.5 L322.4,604.0 L326.5,605.9 L330.5,609.8 L334.6,611.6 L338.6,615.2 L342.7,615.8 L346.8,614.5 L350.8,610.9 L354.9,609.3 L358.9,612.3 L363.0,616.5 L367.0,610.0 L371.1,604.4 L375.1,608.1 L379.2,610.5 L383.2,612.9 L387.3,613.0 L391.3,610.0 L395.4,607.3 L399.4,606.1 L403.5,611.2 L407.5,615.3 L411.6,611.9 L415.6,605.5 L419.7,604.2 L423.7,600.6 L427.8,599.6 L431.8,600.2 L435.9,604.4 L439.9,605.3 L444.0,607.4 L448.0,609.6 L452.1,612.9 L456.1,616.4 L460.2,617.7 L464.2,617.8 L468.3,616.2 L472.3,614.9 L476.4,611.4 L480.4,611.3 L484.5,611.4 L488.5,609.3 L492.6,609.7 L496.6,607.5 L500.7,604.8 L504.7,602.9 L508.8,609.2 L512.8,617.6 L516.9,619.7 L520.9,618.5 L525.0,615.3 L529.0,615.2 L533.1,615.3 L537.1,617.1 L541.2,616.6 L545.2,614.6 L549.3,609.9 L553.3,604.1 L557.4,606.6 L561.4,614.4 L565.5,621.5 L569.5,623.6 L573.6,624.1 L577.6,621.6 L581.7,614.4 L585.7,609.4 L589.8,604.2 L593.8,601.8 L597.9,605.2 L601.9,608.8 L606.0,608.4 L610.0,608.2 L614.1,605.2 L618.1,604.7 L622.2,602.6 L626.3,603.5 L630.3,603.4 L634.4,605.6 L638.4,604.7 L642.5,607.0 L646.5,607.0 L650.6,607.5 L654.6,606.4 L658.7,604.7 L662.7,604.4 L666.8,604.7 L670.8,603.9 L674.9,604.8 L678.9,606.9 L683.0,603.6 L687.0,602.6 L691.1,601.3 L695.1,605.6 L699.2,605.8 L703.2,605.5 L707.3,604.9 L711.3,605.4 L715.4,604.2 L719.4,607.1 L723.5,617.0 L727.5,616.6 L731.6,614.4 L735.6,612.1 L739.7,612.0 L743.7,610.8 L747.8,609.2 L751.8,609.3 L755.9,608.0 L759.9,606.4 L764.0,604.2 L768.0,602.9 L772.1,601.1 L776.1,601.7 L780.2,600.3 L784.2,602.0 L788.3,602.9 L792.3,605.6 L796.4,604.3 L800.4,604.4 L804.5,603.1 L808.5,601.1 L812.6,600.7 L816.6,603.2 L820.7,603.6 L824.7,601.9 L828.8,602.0 L832.8,600.2 L836.9,600.0 L840.9,602.3 L845.0,603.0 L849.0,602.0 L853.1,600.2 L857.1,602.0 L861.2,602.2 L865.2,603.8 L869.3,605.2 L873.3,606.7 L877.4,605.4 L881.4,605.6 L885.5,604.4 L889.5,604.6 L893.6,604.7 L897.7,600.6 L901.7,597.6 L905.8,594.2 L909.8,594.4 L913.9,595.4 L917.9,596.2 L922.0,599.7 L926.0,603.1 L930.1,608.1 L934.1,609.8 L938.2,607.4 L942.2,604.0 L946.3,602.0 L950.3,601.9 L954.4,602.7 L958.4,602.2 L962.5,604.7 L966.5,605.1 L970.6,605.2 L974.6,604.5 L978.7,602.0 L982.7,608.4 L986.8,609.0 L990.8,605.9 L994.9,604.5 L998.9,607.4 L1003.0,606.3 L1007.0,599.8 L1011.1,602.0 L1015.1,611.8 L1019.2,617.2 L1023.2,619.3 L1027.3,610.1 L1031.3,601.9 L1035.4,604.5 L1039.4,610.8 L1043.5,615.8 L1047.5,621.8 L1051.6,618.5 L1055.6,615.5 L1059.7,614.9 L1063.7,612.3 L1067.8,613.2 L1071.8,614.5 L1075.9,616.2 L1079.9,616.0 L1084.0,615.6 L1088.0,613.9 L1092.1,609.9 L1096.1,607.5 L1100.2,611.4 L1104.2,615.9 L1108.3,612.6 L1112.3,608.7 L1116.4,612.3 L1120.4,616.1 L1124.5,615.6 L1128.5,611.9 L1132.6,611.3 L1136.6,616.6 L1140.7,622.4 L1144.7,618.6 L1148.8,612.9 L1152.8,607.2 L1156.9,615.6 L1160.9,623.8 L1165.0,636.0 L1169.0,646.4 L1173.1,651.8 L1177.2,648.4 L1181.2,642.1 L1185.3,638.4 L1189.3,635.7 L1193.4,631.8 L1197.4,624.9 L1201.5,608.2 L1205.5,595.2 L1209.6,585.2 L1213.6,583.9 L1217.7,584.3 L1221.7,583.4 L1225.8,583.0 L1229.8,584.2 L1233.9,585.2 L1237.9,586.1 L1242.0,586.1 L1246.0,590.5 L1250.1,592.6 L1254.1,603.6 L1258.2,603.7 L1262.2,599.3 L1266.3,596.4 L1270.3,594.1 L1274.4,600.2 L1278.4,607.9 L1282.5,614.2 L1286.5,619.9 L1290.6,619.2 L1294.6,613.0 L1298.7,608.8 L1302.7,608.8 L1306.8,608.3 L1310.8,609.2 L1314.9,610.3 L1318.9,613.0 L1323.0,616.8 L1327.0,615.7 L1331.1,614.8 L1335.1,612.0 L1339.2,612.2 L1343.2,612.0 L1347.3,608.3 L1351.3,606.1 L1355.4,601.6 L1359.4,603.9 L1363.5,608.9 L1367.5,612.4 L1371.6,612.6 L1375.6,614.9 L1379.7,614.4 L1383.7,613.3 L1387.8,610.2 L1391.8,612.7 L1395.9,621.5 L1399.9,618.8 L1404.0,614.1 L1408.0,615.0 L1412.1,617.3 L1416.1,618.8 L1420.2,614.8 L1424.2,611.9 L1428.3,613.8 L1432.3,611.9 L1436.4,606.3 L1440.4,603.5 L1444.5,607.4" fill="none" stroke="#20508f" stroke-width="1.6" stroke-linejoin="round"/>
<path d="M71.3,662.8 L75.4,658.9 L79.4,653.5 L83.5,652.0 L87.5,650.2 L91.6,647.8 L95.6,646.6 L99.7,649.4 L103.7,652.6 L107.8,652.5 L111.8,651.7 L115.9,650.9 L119.9,650.8 L124.0,659.8 L128.0,671.1 L132.1,660.6 L136.1,656.0 L140.2,656.2 L144.2,659.6 L148.3,661.1 L152.3,661.7 L156.4,661.6 L160.4,660.8 L164.5,659.8 L168.5,658.1 L172.6,656.4 L176.6,654.0 L180.7,654.1 L184.7,655.3 L188.8,653.9 L192.8,656.0 L196.9,656.3 L200.9,658.0 L205.0,659.1 L209.0,659.4 L213.1,657.6 L217.1,657.5 L221.2,656.8 L225.2,656.6 L229.3,655.7 L233.3,654.9 L237.4,654.0 L241.4,648.6 L245.5,639.5 L249.5,631.1 L253.6,643.4 L257.6,658.6 L261.7,653.8 L265.7,650.8 L269.8,647.5 L273.8,649.4 L277.9,652.7 L281.9,653.5 L286.0,655.5 L290.0,654.1 L294.1,651.1 L298.1,652.3 L302.2,657.6 L306.2,662.3 L310.3,661.0 L314.3,657.3 L318.4,653.1 L322.4,654.6 L326.5,656.9 L330.5,659.8 L334.6,660.4 L338.6,662.4 L342.7,665.2 L346.8,663.1 L350.8,656.5 L354.9,651.4 L358.9,656.1 L363.0,662.7 L367.0,656.2 L371.1,649.8 L375.1,653.6 L379.2,658.3 L383.2,662.2 L387.3,661.2 L391.3,659.0 L395.4,655.1 L399.4,654.0 L403.5,658.5 L407.5,662.4 L411.6,658.2 L415.6,654.2 L419.7,651.4 L423.7,649.8 L427.8,645.8 L431.8,649.5 L435.9,652.9 L439.9,655.1 L444.0,657.2 L448.0,660.1 L452.1,660.9 L456.1,661.6 L460.2,662.7 L464.2,664.7 L468.3,659.8 L472.3,657.5 L476.4,659.9 L480.4,662.5 L484.5,660.6 L488.5,656.3 L492.6,656.4 L496.6,657.2 L500.7,657.1 L504.7,658.6 L508.8,659.5 L512.8,664.8 L516.9,668.6 L520.9,665.3 L525.0,662.0 L529.0,660.5 L533.1,663.9 L537.1,667.0 L541.2,668.3 L545.2,662.4 L549.3,656.1 L553.3,649.0 L557.4,651.0 L561.4,659.1 L565.5,664.1 L569.5,667.7 L573.6,670.1 L577.6,667.1 L581.7,662.6 L585.7,656.1 L589.8,653.3 L593.8,650.5 L597.9,653.1 L601.9,656.3 L606.0,654.7 L610.0,650.9 L614.1,653.6 L618.1,656.0 L622.2,653.2 L626.3,649.8 L630.3,651.3 L634.4,652.8 L638.4,654.0 L642.5,654.0 L646.5,652.9 L650.6,652.6 L654.6,653.4 L658.7,652.2 L662.7,652.8 L666.8,656.5 L670.8,657.2 L674.9,655.2 L678.9,651.5 L683.0,650.8 L687.0,649.2 L691.1,649.3 L695.1,653.6 L699.2,654.4 L703.2,651.0 L707.3,651.2 L711.3,652.5 L715.4,656.5 L719.4,662.9 L723.5,668.0 L727.5,666.9 L731.6,663.1 L735.6,659.3 L739.7,657.8 L743.7,656.5 L747.8,654.5 L751.8,653.0 L755.9,652.6 L759.9,656.5 L764.0,658.0 L768.0,653.7 L772.1,653.4 L776.1,652.1 L780.2,652.1 L784.2,653.4 L788.3,653.1 L792.3,654.2 L796.4,653.3 L800.4,653.1 L804.5,653.0 L808.5,651.2 L812.6,650.5 L816.6,650.5 L820.7,649.2 L824.7,648.5 L828.8,648.2 L832.8,649.3 L836.9,652.3 L840.9,654.8 L845.0,658.9 L849.0,655.6 L853.1,652.5 L857.1,651.1 L861.2,653.0 L865.2,653.6 L869.3,656.0 L873.3,656.2 L877.4,659.8 L881.4,656.3 L885.5,653.1 L889.5,650.6 L893.6,646.7 L897.7,645.2 L901.7,643.9 L905.8,644.6 L909.8,644.4 L913.9,645.5 L917.9,645.5 L922.0,650.4 L926.0,654.0 L930.1,655.7 L934.1,659.1 L938.2,659.9 L942.2,656.4 L946.3,651.2 L950.3,648.2 L954.4,651.0 L958.4,652.2 L962.5,652.2 L966.5,650.9 L970.6,650.8 L974.6,652.2 L978.7,654.7 L982.7,657.1 L986.8,656.8 L990.8,654.1 L994.9,652.4 L998.9,656.6 L1003.0,655.0 L1007.0,649.9 L1011.1,648.6 L1015.1,655.5 L1019.2,661.1 L1023.2,656.1 L1027.3,650.3 L1031.3,646.0 L1035.4,652.4 L1039.4,658.7 L1043.5,665.7 L1047.5,667.5 L1051.6,664.5 L1055.6,662.2 L1059.7,657.2 L1063.7,654.8 L1067.8,656.9 L1071.8,662.0 L1075.9,664.2 L1079.9,660.7 L1084.0,659.5 L1088.0,658.0 L1092.1,654.3 L1096.1,657.5 L1100.2,659.5 L1104.2,660.5 L1108.3,657.2 L1112.3,657.1 L1116.4,658.7 L1120.4,663.1 L1124.5,662.0 L1128.5,660.5 L1132.6,658.0 L1136.6,660.8 L1140.7,667.1 L1144.7,668.7 L1148.8,662.5 L1152.8,656.5 L1156.9,658.9 L1160.9,666.5 L1165.0,675.8 L1169.0,685.3 L1173.1,687.6 L1177.2,686.6 L1181.2,681.3 L1185.3,678.7 L1189.3,684.2 L1193.4,684.8 L1197.4,674.4 L1201.5,663.7 L1205.5,653.0 L1209.6,643.0 L1213.6,638.0 L1217.7,637.3 L1221.7,638.7 L1225.8,638.9 L1229.8,636.7 L1233.9,636.7 L1237.9,637.0 L1242.0,639.2 L1246.0,640.4 L1250.1,645.0 L1254.1,652.2 L1258.2,654.6 L1262.2,650.2 L1266.3,644.8 L1270.3,645.7 L1274.4,650.0 L1278.4,655.9 L1282.5,663.1 L1286.5,662.5 L1290.6,659.3 L1294.6,658.6 L1298.7,657.5 L1302.7,656.4 L1306.8,656.4 L1310.8,656.6 L1314.9,658.7 L1318.9,662.2 L1323.0,663.1 L1327.0,662.1 L1331.1,657.7 L1335.1,655.0 L1339.2,654.0 L1343.2,654.9 L1347.3,653.7 L1351.3,652.4 L1355.4,654.8 L1359.4,659.1 L1363.5,660.4 L1367.5,663.0 L1371.6,662.8 L1375.6,665.2 L1379.7,659.3 L1383.7,656.1 L1387.8,654.0 L1391.8,660.4 L1395.9,666.0 L1399.9,664.8 L1404.0,658.8 L1408.0,657.8 L1412.1,661.3 L1416.1,661.9 L1420.2,661.1 L1424.2,660.0 L1428.3,657.9 L1432.3,655.8 L1436.4,652.7 L1440.4,653.9 L1444.5,658.1" fill="none" stroke="#3a78c4" stroke-width="1.6" stroke-linejoin="round"/>
<path d="M71.3,707.8 L75.4,704.8 L79.4,700.7 L83.5,701.2 L87.5,700.6 L91.6,699.5 L95.6,699.8 L99.7,699.9 L103.7,703.5 L107.8,701.7 L111.8,702.2 L115.9,702.4 L119.9,702.0 L124.0,705.6 L128.0,710.9 L132.1,707.3 L136.1,702.3 L140.2,704.3 L144.2,704.6 L148.3,704.9 L152.3,707.0 L156.4,706.7 L160.4,707.4 L164.5,706.6 L168.5,704.5 L172.6,703.0 L176.6,702.8 L180.7,702.6 L184.7,703.1 L188.8,701.6 L192.8,702.6 L196.9,703.5 L200.9,705.9 L205.0,707.3 L209.0,707.0 L213.1,703.6 L217.1,700.8 L221.2,700.4 L225.2,698.7 L229.3,700.9 L233.3,701.6 L237.4,703.6 L241.4,699.8 L245.5,695.9 L249.5,691.0 L253.6,695.9 L257.6,699.9 L261.7,704.9 L265.7,699.9 L269.8,694.5 L273.8,696.1 L277.9,699.9 L281.9,704.2 L286.0,703.8 L290.0,702.2 L294.1,699.5 L298.1,701.0 L302.2,705.3 L306.2,706.8 L310.3,705.4 L314.3,703.5 L318.4,699.6 L322.4,702.3 L326.5,702.9 L330.5,704.1 L334.6,706.8 L338.6,707.5 L342.7,712.2 L346.8,708.1 L350.8,703.9 L354.9,701.5 L358.9,705.4 L363.0,709.8 L367.0,702.9 L371.1,699.4 L375.1,700.7 L379.2,703.1 L383.2,703.5 L387.3,705.7 L391.3,704.2 L395.4,703.0 L399.4,702.5 L403.5,704.8 L407.5,705.7 L411.6,702.4 L415.6,698.4 L419.7,705.5 L423.7,702.8 L427.8,699.1 L431.8,699.6 L435.9,702.4 L439.9,703.4 L444.0,705.4 L448.0,707.0 L452.1,708.1 L456.1,708.1 L460.2,708.1 L464.2,707.3 L468.3,704.8 L472.3,701.8 L476.4,706.9 L480.4,708.2 L484.5,706.4 L488.5,702.2 L492.6,702.9 L496.6,704.2 L500.7,703.7 L504.7,703.5 L508.8,705.6 L512.8,708.4 L516.9,711.1 L520.9,708.1 L525.0,705.6 L529.0,704.5 L533.1,708.9 L537.1,710.4 L541.2,707.5 L545.2,703.9 L549.3,700.0 L553.3,696.7 L557.4,698.8 L561.4,704.3 L565.5,707.5 L569.5,712.6 L573.6,711.8 L577.6,710.2 L581.7,706.7 L585.7,703.7 L589.8,700.3 L593.8,699.6 L597.9,700.1 L601.9,703.8 L606.0,699.8 L610.0,699.0 L614.1,700.5 L618.1,700.5 L622.2,700.0 L626.3,698.1 L630.3,699.8 L634.4,700.7 L638.4,702.8 L642.5,704.5 L646.5,702.1 L650.6,700.9 L654.6,700.3 L658.7,698.8 L662.7,701.4 L666.8,704.2 L670.8,704.3 L674.9,702.5 L678.9,701.7 L683.0,700.9 L687.0,698.8 L691.1,697.3 L695.1,703.1 L699.2,703.8 L703.2,699.8 L707.3,699.4 L711.3,700.8 L715.4,702.3 L719.4,705.8 L723.5,713.5 L727.5,711.0 L731.6,709.1 L735.6,707.1 L739.7,705.3 L743.7,705.5 L747.8,702.8 L751.8,702.1 L755.9,701.3 L759.9,703.1 L764.0,700.6 L768.0,699.7 L772.1,699.1 L776.1,699.8 L780.2,700.4 L784.2,700.3 L788.3,700.3 L792.3,701.2 L796.4,704.0 L800.4,702.1 L804.5,702.9 L808.5,702.6 L812.6,702.4 L816.6,699.6 L820.7,698.4 L824.7,696.2 L828.8,698.6 L832.8,700.9 L836.9,701.6 L840.9,705.8 L845.0,707.0 L849.0,702.5 L853.1,699.7 L857.1,700.0 L861.2,701.4 L865.2,702.8 L869.3,705.8 L873.3,708.0 L877.4,707.1 L881.4,702.8 L885.5,699.6 L889.5,698.6 L893.6,695.6 L897.7,693.8 L901.7,692.8 L905.8,693.4 L909.8,696.2 L913.9,697.5 L917.9,698.1 L922.0,699.7 L926.0,701.3 L930.1,703.4 L934.1,704.7 L938.2,703.8 L942.2,702.4 L946.3,699.8 L950.3,698.0 L954.4,700.1 L958.4,699.0 L962.5,699.9 L966.5,700.6 L970.6,701.3 L974.6,699.6 L978.7,697.9 L982.7,701.6 L986.8,708.5 L990.8,704.5 L994.9,702.4 L998.9,700.6 L1003.0,699.6 L1007.0,697.9 L1011.1,699.8 L1015.1,706.3 L1019.2,706.4 L1023.2,704.6 L1027.3,701.5 L1031.3,698.9 L1035.4,701.4 L1039.4,707.5 L1043.5,711.2 L1047.5,708.7 L1051.6,706.7 L1055.6,705.1 L1059.7,703.5 L1063.7,702.7 L1067.8,702.6 L1071.8,703.7 L1075.9,705.9 L1079.9,704.2 L1084.0,701.8 L1088.0,700.8 L1092.1,700.5 L1096.1,703.7 L1100.2,707.6 L1104.2,709.1 L1108.3,706.6 L1112.3,704.0 L1116.4,703.5 L1120.4,703.2 L1124.5,702.9 L1128.5,701.9 L1132.6,703.1 L1136.6,708.4 L1140.7,714.8 L1144.7,709.7 L1148.8,705.2 L1152.8,701.9 L1156.9,710.9 L1160.9,717.4 L1165.0,722.0 L1169.0,725.0 L1173.1,724.9 L1177.2,721.6 L1181.2,719.3 L1185.3,715.7 L1189.3,718.3 L1193.4,720.4 L1197.4,713.1 L1201.5,705.4 L1205.5,698.6 L1209.6,694.8 L1213.6,690.2 L1217.7,687.8 L1221.7,688.3 L1225.8,688.3 L1229.8,688.4 L1233.9,691.5 L1237.9,688.8 L1242.0,689.7 L1246.0,692.4 L1250.1,697.4 L1254.1,700.3 L1258.2,700.9 L1262.2,698.3 L1266.3,695.3 L1270.3,695.8 L1274.4,699.4 L1278.4,704.4 L1282.5,707.2 L1286.5,709.3 L1290.6,706.5 L1294.6,706.5 L1298.7,705.3 L1302.7,704.4 L1306.8,703.3 L1310.8,704.0 L1314.9,704.7 L1318.9,707.6 L1323.0,707.4 L1327.0,705.8 L1331.1,705.6 L1335.1,705.0 L1339.2,704.9 L1343.2,703.0 L1347.3,699.1 L1351.3,699.1 L1355.4,699.4 L1359.4,701.7 L1363.5,703.6 L1367.5,705.3 L1371.6,708.1 L1375.6,709.0 L1379.7,705.4 L1383.7,703.9 L1387.8,703.4 L1391.8,707.5 L1395.9,710.2 L1399.9,707.3 L1404.0,703.9 L1408.0,704.6 L1412.1,707.1 L1416.1,709.7 L1420.2,708.6 L1424.2,704.3 L1428.3,703.9 L1432.3,702.1 L1436.4,701.0 L1440.4,703.8 L1444.5,707.1" fill="none" stroke="#6a9fd6" stroke-width="1.6" stroke-linejoin="round"/>
<path d="M71.3,751.6 L75.4,749.6 L79.4,747.6 L83.5,747.7 L87.5,746.9 L91.6,747.1 L95.6,746.1 L99.7,748.8 L103.7,751.7 L107.8,750.7 L111.8,750.8 L115.9,748.4 L119.9,748.9 L124.0,749.9 L128.0,751.6 L132.1,750.4 L136.1,747.8 L140.2,747.1 L144.2,746.1 L148.3,748.2 L152.3,750.2 L156.4,750.9 L160.4,752.2 L164.5,750.4 L168.5,751.4 L172.6,750.0 L176.6,749.5 L180.7,751.3 L184.7,749.5 L188.8,749.2 L192.8,751.8 L196.9,752.9 L200.9,752.8 L205.0,753.7 L209.0,751.3 L213.1,750.3 L217.1,747.8 L221.2,748.3 L225.2,746.5 L229.3,747.7 L233.3,748.1 L237.4,747.3 L241.4,746.2 L245.5,743.9 L249.5,744.6 L253.6,746.6 L257.6,749.3 L261.7,751.7 L265.7,747.2 L269.8,746.6 L273.8,746.8 L277.9,747.7 L281.9,750.0 L286.0,749.9 L290.0,749.8 L294.1,750.6 L298.1,751.4 L302.2,750.2 L306.2,752.8 L310.3,749.3 L314.3,749.4 L318.4,747.9 L322.4,746.5 L326.5,749.3 L330.5,749.1 L334.6,751.0 L338.6,751.3 L342.7,753.1 L346.8,752.6 L350.8,752.7 L354.9,749.2 L358.9,750.1 L363.0,750.2 L367.0,749.9 L371.1,749.2 L375.1,749.9 L379.2,751.0 L383.2,752.2 L387.3,749.6 L391.3,749.6 L395.4,750.6 L399.4,751.9 L403.5,751.1 L407.5,752.8 L411.6,749.1 L415.6,748.8 L419.7,751.1 L423.7,753.5 L427.8,752.3 L431.8,753.7 L435.9,752.8 L439.9,752.2 L444.0,752.2 L448.0,752.1 L452.1,753.0 L456.1,754.4 L460.2,756.8 L464.2,755.6 L468.3,751.3 L472.3,748.7 L476.4,751.3 L480.4,750.6 L484.5,750.5 L488.5,749.6 L492.6,750.1 L496.6,750.8 L500.7,750.1 L504.7,750.2 L508.8,749.6 L512.8,753.3 L516.9,753.2 L520.9,752.2 L525.0,751.9 L529.0,751.3 L533.1,753.9 L537.1,755.6 L541.2,753.0 L545.2,751.3 L549.3,747.7 L553.3,747.2 L557.4,749.2 L561.4,753.6 L565.5,754.2 L569.5,754.9 L573.6,756.6 L577.6,755.5 L581.7,754.0 L585.7,751.0 L589.8,749.3 L593.8,748.4 L597.9,747.5 L601.9,746.7 L606.0,746.7 L610.0,747.6 L614.1,749.8 L618.1,752.8 L622.2,751.7 L626.3,750.1 L630.3,750.1 L634.4,750.0 L638.4,749.6 L642.5,750.0 L646.5,750.6 L650.6,750.2 L654.6,748.4 L658.7,748.8 L662.7,749.6 L666.8,751.0 L670.8,751.7 L674.9,750.4 L678.9,748.4 L683.0,748.9 L687.0,747.5 L691.1,749.0 L695.1,751.7 L699.2,752.7 L703.2,749.2 L707.3,749.4 L711.3,750.2 L715.4,751.6 L719.4,751.7 L723.5,754.0 L727.5,753.8 L731.6,754.4 L735.6,752.9 L739.7,752.7 L743.7,751.3 L747.8,750.6 L751.8,748.8 L755.9,748.7 L759.9,748.2 L764.0,747.7 L768.0,746.2 L772.1,747.0 L776.1,747.0 L780.2,747.1 L784.2,748.3 L788.3,748.7 L792.3,748.2 L796.4,748.9 L800.4,748.8 L804.5,751.0 L808.5,752.0 L812.6,751.5 L816.6,750.3 L820.7,748.0 L824.7,745.7 L828.8,745.3 L832.8,747.9 L836.9,748.6 L840.9,751.8 L845.0,753.9 L849.0,752.1 L853.1,750.1 L857.1,747.5 L861.2,749.3 L865.2,749.7 L869.3,750.4 L873.3,750.2 L877.4,749.9 L881.4,748.0 L885.5,748.3 L889.5,747.4 L893.6,745.7 L897.7,746.5 L901.7,745.7 L905.8,745.1 L909.8,745.2 L913.9,745.9 L917.9,746.2 L922.0,746.8 L926.0,747.3 L930.1,750.0 L934.1,751.4 L938.2,751.2 L942.2,750.4 L946.3,748.8 L950.3,749.9 L954.4,748.0 L958.4,749.2 L962.5,749.2 L966.5,748.8 L970.6,747.2 L974.6,748.1 L978.7,748.3 L982.7,750.6 L986.8,751.3 L990.8,747.6 L994.9,747.3 L998.9,747.5 L1003.0,748.9 L1007.0,750.5 L1011.1,751.6 L1015.1,752.7 L1019.2,753.1 L1023.2,750.7 L1027.3,748.0 L1031.3,746.8 L1035.4,750.3 L1039.4,752.7 L1043.5,754.0 L1047.5,754.2 L1051.6,753.5 L1055.6,753.1 L1059.7,754.2 L1063.7,750.5 L1067.8,749.2 L1071.8,748.7 L1075.9,747.3 L1079.9,745.8 L1084.0,746.7 L1088.0,747.1 L1092.1,745.9 L1096.1,747.4 L1100.2,748.2 L1104.2,749.6 L1108.3,752.0 L1112.3,751.4 L1116.4,753.6 L1120.4,754.3 L1124.5,752.9 L1128.5,750.4 L1132.6,750.4 L1136.6,752.2 L1140.7,756.5 L1144.7,754.0 L1148.8,751.9 L1152.8,750.4 L1156.9,753.1 L1160.9,756.8 L1165.0,759.3 L1169.0,763.9 L1173.1,765.2 L1177.2,762.2 L1181.2,760.7 L1185.3,759.9 L1189.3,759.4 L1193.4,758.1 L1197.4,751.4 L1201.5,747.7 L1205.5,745.9 L1209.6,743.2 L1213.6,741.8 L1217.7,740.9 L1221.7,742.4 L1225.8,742.2 L1229.8,744.6 L1233.9,743.6 L1237.9,741.8 L1242.0,739.5 L1246.0,744.7 L1250.1,748.2 L1254.1,750.1 L1258.2,748.7 L1262.2,748.9 L1266.3,748.4 L1270.3,748.4 L1274.4,748.9 L1278.4,750.9 L1282.5,753.7 L1286.5,753.5 L1290.6,751.1 L1294.6,748.8 L1298.7,749.6 L1302.7,750.4 L1306.8,751.9 L1310.8,752.6 L1314.9,752.5 L1318.9,752.0 L1323.0,753.8 L1327.0,751.5 L1331.1,750.4 L1335.1,749.3 L1339.2,748.3 L1343.2,747.0 L1347.3,747.2 L1351.3,746.5 L1355.4,747.7 L1359.4,750.0 L1363.5,749.8 L1367.5,751.7 L1371.6,754.7 L1375.6,752.7 L1379.7,753.1 L1383.7,751.3 L1387.8,749.8 L1391.8,750.1 L1395.9,752.0 L1399.9,752.9 L1404.0,751.6 L1408.0,752.9 L1412.1,753.6 L1416.1,753.2 L1420.2,752.1 L1424.2,751.0 L1428.3,751.4 L1432.3,751.3 L1436.4,748.8 L1440.4,751.1 L1444.5,754.4" fill="none" stroke="#b8dcf5" stroke-width="1.6" stroke-linejoin="round"/>
<line x1="71.0" y1="550.3" x2="1448.0" y2="550.3" stroke="rgba(204,204,220,0.16)" stroke-width="1.6" />
<text x="61.0" y="555.1" font-size="16" fill="#dcdde6" text-anchor="end" font-weight="normal" >150</text>
<line x1="71.0" y1="632.7" x2="1448.0" y2="632.7" stroke="rgba(204,204,220,0.16)" stroke-width="1.6" />
<text x="61.0" y="637.5" font-size="16" fill="#dcdde6" text-anchor="end" font-weight="normal" >100</text>
<line x1="71.0" y1="715.1" x2="1448.0" y2="715.1" stroke="rgba(204,204,220,0.16)" stroke-width="1.6" />
<text x="61.0" y="719.9" font-size="16" fill="#dcdde6" text-anchor="end" font-weight="normal" >50</text>
<line x1="71.0" y1="797.5" x2="1448.0" y2="797.5" stroke="rgba(204,204,220,0.16)" stroke-width="1.6" />
<text x="61.0" y="802.3" font-size="16" fill="#dcdde6" text-anchor="end" font-weight="normal" >0</text>
<line x1="75.3" y1="550.0" x2="75.3" y2="797.5" stroke="rgba(204,204,220,0.16)" stroke-width="1.6" />
<text x="75.3" y="822.5" font-size="16" fill="#dcdde6" text-anchor="middle" font-weight="normal" >16:50</text>
<line x1="190.0" y1="550.0" x2="190.0" y2="797.5" stroke="rgba(204,204,220,0.16)" stroke-width="1.6" />
<text x="190.0" y="822.5" font-size="16" fill="#dcdde6" text-anchor="middle" font-weight="normal" >16:55</text>
<line x1="304.7" y1="550.0" x2="304.7" y2="797.5" stroke="rgba(204,204,220,0.16)" stroke-width="1.6" />
<text x="304.7" y="822.5" font-size="16" fill="#dcdde6" text-anchor="middle" font-weight="normal" >17:00</text>
<line x1="419.5" y1="550.0" x2="419.5" y2="797.5" stroke="rgba(204,204,220,0.16)" stroke-width="1.6" />
<text x="419.5" y="822.5" font-size="16" fill="#dcdde6" text-anchor="middle" font-weight="normal" >17:05</text>
<line x1="534.2" y1="550.0" x2="534.2" y2="797.5" stroke="rgba(204,204,220,0.16)" stroke-width="1.6" />
<text x="534.2" y="822.5" font-size="16" fill="#dcdde6" text-anchor="middle" font-weight="normal" >17:10</text>
<line x1="648.9" y1="550.0" x2="648.9" y2="797.5" stroke="rgba(204,204,220,0.16)" stroke-width="1.6" />
<text x="648.9" y="822.5" font-size="16" fill="#dcdde6" text-anchor="middle" font-weight="normal" >17:15</text>
<line x1="763.6" y1="550.0" x2="763.6" y2="797.5" stroke="rgba(204,204,220,0.16)" stroke-width="1.6" />
<text x="763.6" y="822.5" font-size="16" fill="#dcdde6" text-anchor="middle" font-weight="normal" >17:20</text>
<line x1="878.3" y1="550.0" x2="878.3" y2="797.5" stroke="rgba(204,204,220,0.16)" stroke-width="1.6" />
<text x="878.3" y="822.5" font-size="16" fill="#dcdde6" text-anchor="middle" font-weight="normal" >17:25</text>
<line x1="993.1" y1="550.0" x2="993.1" y2="797.5" stroke="rgba(204,204,220,0.16)" stroke-width="1.6" />
<text x="993.1" y="822.5" font-size="16" fill="#dcdde6" text-anchor="middle" font-weight="normal" >17:30</text>
<line x1="1107.8" y1="550.0" x2="1107.8" y2="797.5" stroke="rgba(204,204,220,0.16)" stroke-width="1.6" />
<text x="1107.8" y="822.5" font-size="16" fill="#dcdde6" text-anchor="middle" font-weight="normal" >17:35</text>
<line x1="1222.5" y1="550.0" x2="1222.5" y2="797.5" stroke="rgba(204,204,220,0.16)" stroke-width="1.6" />
<text x="1222.5" y="822.5" font-size="16" fill="#dcdde6" text-anchor="middle" font-weight="normal" >17:40</text>
<line x1="1337.2" y1="550.0" x2="1337.2" y2="797.5" stroke="rgba(204,204,220,0.16)" stroke-width="1.6" />
<text x="1337.2" y="822.5" font-size="16" fill="#dcdde6" text-anchor="middle" font-weight="normal" >17:45</text>
<rect x="47.5" y="848" width="18" height="6" rx="3" fill="#c0e4ff"/>
<text x="84.8" y="856.5" font-size="16.5" fill="#dcdde6" text-anchor="start" font-weight="normal" >web_server_01</text>
<rect x="219" y="848" width="18" height="6" rx="3" fill="#8ab8ff"/>
<text x="256.0" y="856.5" font-size="16.5" fill="#dcdde6" text-anchor="start" font-weight="normal" >web_server_02</text>
<rect x="393.6" y="848" width="18" height="6" rx="3" fill="#3274d9"/>
<text x="430.0" y="856.5" font-size="16.5" fill="#dcdde6" text-anchor="start" font-weight="normal" >web_server_03</text>
<rect x="570" y="848" width="18" height="6" rx="3" fill="#1f60c4"/>
<text x="604.7" y="856.5" font-size="16.5" fill="#dcdde6" text-anchor="start" font-weight="normal" >web_server_04</text>
<rect x="1494.5" y="483.5" width="723" height="393" rx="2.5" fill="#191e26" stroke="#24242e" stroke-width="2"/>
<text x="1505.4" y="511.5" font-size="18.5" fill="#dcdde8" text-anchor="start" font-weight="normal"  textLength="102.9" lengthAdjust="spacingAndGlyphs" stroke="#dcdde8" stroke-width="0.6">Google hits</text>
<rect x="1505.4" y="574.0" width="129.0" height="261.8" fill="#23222b" />
<rect x="1505.4" y="833.0" width="129.0" height="2.8" fill="#2e4571" />
<rect x="1505.4" y="833.0" width="129.0" height="3.0" fill="#5794f2" />
<text x="1569.9" y="565.4" font-size="34" fill="#6a9ff5" text-anchor="middle" font-weight="normal"  textLength="88.4" lengthAdjust="spacingAndGlyphs" stroke="#6a9ff5" stroke-width="0.3">0.400</text>
<text x="1569.9" y="857.0" font-size="20" fill="#dcdde6" text-anchor="middle" font-weight="normal" >A-series</text>
<rect x="1648.0" y="574.0" width="129.0" height="261.8" fill="#23222b" />
<rect x="1648.0" y="762.5" width="129.0" height="73.3" fill="#2e4571" />
<rect x="1648.0" y="762.5" width="129.0" height="3.0" fill="#5794f2" />
<text x="1712.5" y="565.4" font-size="34" fill="#6a9ff5" text-anchor="middle" font-weight="normal"  textLength="59.5" lengthAdjust="spacingAndGlyphs" stroke="#6a9ff5" stroke-width="0.3">27.7</text>
<text x="1712.5" y="857.0" font-size="20" fill="#dcdde6" text-anchor="middle" font-weight="normal" >B-series</text>
<rect x="1791.5" y="574.0" width="129.0" height="261.8" fill="#23222b" />
<rect x="1791.5" y="738.0" width="129.0" height="97.8" fill="#2e4571" />
<rect x="1791.5" y="738.0" width="129.0" height="3.0" fill="#5794f2" />
<text x="1856.0" y="565.4" font-size="34" fill="#6a9ff5" text-anchor="middle" font-weight="normal"  textLength="56" lengthAdjust="spacingAndGlyphs" stroke="#6a9ff5" stroke-width="0.3">37.1</text>
<text x="1856.0" y="857.0" font-size="20" fill="#dcdde6" text-anchor="middle" font-weight="normal" >C-series</text>
<rect x="1934.7" y="574.0" width="129.0" height="261.8" fill="#23222b" />
<rect x="1934.7" y="658.3" width="129.0" height="177.5" fill="#543d63" />
<rect x="1934.7" y="658.3" width="129.0" height="3.0" fill="#b877d9" />
<text x="1999.2" y="565.4" font-size="34" fill="#b877d9" text-anchor="middle" font-weight="normal"  textLength="66.2" lengthAdjust="spacingAndGlyphs" stroke="#b877d9" stroke-width="0.3">66.5</text>
<text x="1999.2" y="857.0" font-size="20" fill="#dcdde6" text-anchor="middle" font-weight="normal" >D-series</text>
<rect x="2077.2" y="574.0" width="129.0" height="261.8" fill="#23222b" />
<rect x="2077.2" y="779.5" width="129.0" height="56.3" fill="#2e4571" />
<rect x="2077.2" y="779.5" width="129.0" height="3.0" fill="#5794f2" />
<text x="2141.7" y="565.4" font-size="34" fill="#6a9ff5" text-anchor="middle" font-weight="normal"  textLength="61" lengthAdjust="spacingAndGlyphs" stroke="#6a9ff5" stroke-width="0.3">21.2</text>
<text x="2141.7" y="857.0" font-size="20" fill="#dcdde6" text-anchor="middle" font-weight="normal" >E-series</text>
<rect x="22.5" y="889.5" width="2195" height="341" rx="2.5" fill="#191e26" stroke="#24242e" stroke-width="2"/>
<text x="1119.6" y="917.0" font-size="18.5" fill="#dcdde8" text-anchor="middle" font-weight="normal"  textLength="214.8" lengthAdjust="spacingAndGlyphs" stroke="#dcdde8" stroke-width="0.6">client side full page load</text>
<g transform="translate(0,1.2)">
<line x1="79.0" y1="1187.2" x2="1976.0" y2="1187.2" stroke="rgba(204,204,220,0.16)" stroke-width="1.6" />
<text x="71.0" y="1192.0" font-size="16" fill="#dcdde6" text-anchor="end" font-weight="normal" >0 ms</text>
<line x1="79.0" y1="1141.0" x2="1976.0" y2="1141.0" stroke="rgba(204,204,220,0.16)" stroke-width="1.6" />
<text x="71.0" y="1145.8" font-size="16" fill="#dcdde6" text-anchor="end" font-weight="normal" >1 s</text>
<line x1="79.0" y1="1094.8" x2="1976.0" y2="1094.8" stroke="rgba(204,204,220,0.16)" stroke-width="1.6" />
<text x="71.0" y="1099.6" font-size="16" fill="#dcdde6" text-anchor="end" font-weight="normal" >2 s</text>
<line x1="79.0" y1="1048.6" x2="1976.0" y2="1048.6" stroke="rgba(204,204,220,0.16)" stroke-width="1.6" />
<text x="71.0" y="1053.4" font-size="16" fill="#dcdde6" text-anchor="end" font-weight="normal" >3 s</text>
<line x1="79.0" y1="1002.4" x2="1976.0" y2="1002.4" stroke="rgba(204,204,220,0.16)" stroke-width="1.6" />
<text x="71.0" y="1007.2" font-size="16" fill="#dcdde6" text-anchor="end" font-weight="normal" >4 s</text>
<line x1="79.0" y1="956.2" x2="1976.0" y2="956.2" stroke="rgba(204,204,220,0.16)" stroke-width="1.6" />
<text x="71.0" y="961.0" font-size="16" fill="#dcdde6" text-anchor="end" font-weight="normal" >5 s</text>
<line x1="84.8" y1="956.0" x2="84.8" y2="1187.2" stroke="rgba(204,204,220,0.16)" stroke-width="1.6" />
<text x="84.8" y="1213.5" font-size="16" fill="#dcdde6" text-anchor="middle" font-weight="normal" >16:50</text>
<line x1="243.1" y1="956.0" x2="243.1" y2="1187.2" stroke="rgba(204,204,220,0.16)" stroke-width="1.6" />
<text x="243.1" y="1213.5" font-size="16" fill="#dcdde6" text-anchor="middle" font-weight="normal" >16:55</text>
<line x1="401.5" y1="956.0" x2="401.5" y2="1187.2" stroke="rgba(204,204,220,0.16)" stroke-width="1.6" />
<text x="401.5" y="1213.5" font-size="16" fill="#dcdde6" text-anchor="middle" font-weight="normal" >17:00</text>
<line x1="559.8" y1="956.0" x2="559.8" y2="1187.2" stroke="rgba(204,204,220,0.16)" stroke-width="1.6" />
<text x="559.8" y="1213.5" font-size="16" fill="#dcdde6" text-anchor="middle" font-weight="normal" >17:05</text>
<line x1="718.2" y1="956.0" x2="718.2" y2="1187.2" stroke="rgba(204,204,220,0.16)" stroke-width="1.6" />
<text x="718.2" y="1213.5" font-size="16" fill="#dcdde6" text-anchor="middle" font-weight="normal" >17:10</text>
<line x1="876.5" y1="956.0" x2="876.5" y2="1187.2" stroke="rgba(204,204,220,0.16)" stroke-width="1.6" />
<text x="876.5" y="1213.5" font-size="16" fill="#dcdde6" text-anchor="middle" font-weight="normal" >17:15</text>
<line x1="1034.9" y1="956.0" x2="1034.9" y2="1187.2" stroke="rgba(204,204,220,0.16)" stroke-width="1.6" />
<text x="1034.9" y="1213.5" font-size="16" fill="#dcdde6" text-anchor="middle" font-weight="normal" >17:20</text>
<line x1="1193.2" y1="956.0" x2="1193.2" y2="1187.2" stroke="rgba(204,204,220,0.16)" stroke-width="1.6" />
<text x="1193.2" y="1213.5" font-size="16" fill="#dcdde6" text-anchor="middle" font-weight="normal" >17:25</text>
<line x1="1351.6" y1="956.0" x2="1351.6" y2="1187.2" stroke="rgba(204,204,220,0.16)" stroke-width="1.6" />
<text x="1351.6" y="1213.5" font-size="16" fill="#dcdde6" text-anchor="middle" font-weight="normal" >17:30</text>
<line x1="1509.9" y1="956.0" x2="1509.9" y2="1187.2" stroke="rgba(204,204,220,0.16)" stroke-width="1.6" />
<text x="1509.9" y="1213.5" font-size="16" fill="#dcdde6" text-anchor="middle" font-weight="normal" >17:35</text>
<line x1="1668.3" y1="956.0" x2="1668.3" y2="1187.2" stroke="rgba(204,204,220,0.16)" stroke-width="1.6" />
<text x="1668.3" y="1213.5" font-size="16" fill="#dcdde6" text-anchor="middle" font-weight="normal" >17:40</text>
<line x1="1826.6" y1="956.0" x2="1826.6" y2="1187.2" stroke="rgba(204,204,220,0.16)" stroke-width="1.6" />
<text x="1826.6" y="1213.5" font-size="16" fill="#dcdde6" text-anchor="middle" font-weight="normal" >17:45</text>
<rect x="78.0" y="1031.8" width="29.0" height="78.6" fill="#e5503f" />
<rect x="78.0" y="1110.4" width="29.0" height="47.3" fill="#ec8640" />
<rect x="78.0" y="1157.7" width="29.0" height="25.9" fill="#e6b73e" />
<rect x="78.0" y="1183.6" width="29.0" height="3.6" fill="#efcf8c" />
<rect x="149.6" y="1089.8" width="83.4" height="42.4" fill="#e5503f" />
<rect x="149.6" y="1132.2" width="83.4" height="34.4" fill="#ec8640" />
<rect x="149.6" y="1166.6" width="83.4" height="17.4" fill="#e6b73e" />
<rect x="149.6" y="1184.0" width="83.4" height="3.2" fill="#efcf8c" />
<rect x="275.9" y="1042.0" width="83.9" height="68.8" fill="#e5503f" />
<rect x="275.9" y="1110.8" width="83.9" height="46.0" fill="#ec8640" />
<rect x="275.9" y="1156.8" width="83.9" height="25.0" fill="#e6b73e" />
<rect x="275.9" y="1181.8" width="83.9" height="5.4" fill="#efcf8c" />
<rect x="402.2" y="1043.8" width="84.4" height="67.9" fill="#e5503f" />
<rect x="402.2" y="1111.7" width="84.4" height="46.4" fill="#ec8640" />
<rect x="402.2" y="1158.1" width="84.4" height="24.9" fill="#e6b73e" />
<rect x="402.2" y="1183.0" width="84.4" height="4.2" fill="#efcf8c" />
<rect x="529.0" y="1056.8" width="84.0" height="60.7" fill="#e5503f" />
<rect x="529.0" y="1117.5" width="84.0" height="44.2" fill="#ec8640" />
<rect x="529.0" y="1161.7" width="84.0" height="21.3" fill="#e6b73e" />
<rect x="529.0" y="1183.0" width="84.0" height="4.2" fill="#efcf8c" />
<rect x="655.4" y="1060.4" width="84.3" height="54.0" fill="#e5503f" />
<rect x="655.4" y="1114.4" width="84.3" height="43.3" fill="#ec8640" />
<rect x="655.4" y="1157.7" width="84.3" height="24.3" fill="#e6b73e" />
<rect x="655.4" y="1182.0" width="84.3" height="5.2" fill="#efcf8c" />
<rect x="782.0" y="1060.4" width="84.0" height="62.0" fill="#e5503f" />
<rect x="782.0" y="1122.4" width="84.0" height="38.0" fill="#ec8640" />
<rect x="782.0" y="1160.4" width="84.0" height="20.6" fill="#e6b73e" />
<rect x="782.0" y="1181.0" width="84.0" height="6.2" fill="#efcf8c" />
<rect x="908.5" y="1043.0" width="83.5" height="63.3" fill="#e5503f" />
<rect x="908.5" y="1106.3" width="83.5" height="49.1" fill="#ec8640" />
<rect x="908.5" y="1155.4" width="83.5" height="24.6" fill="#e6b73e" />
<rect x="908.5" y="1180.0" width="83.5" height="7.2" fill="#efcf8c" />
<rect x="1034.9" y="1003.5" width="84.1" height="86.9" fill="#e5503f" />
<rect x="1034.9" y="1090.4" width="84.1" height="61.5" fill="#ec8640" />
<rect x="1034.9" y="1151.9" width="84.1" height="27.1" fill="#e6b73e" />
<rect x="1034.9" y="1179.0" width="84.1" height="8.2" fill="#efcf8c" />
<rect x="1160.6" y="1053.3" width="84.7" height="59.8" fill="#e5503f" />
<rect x="1160.6" y="1113.1" width="84.7" height="41.5" fill="#ec8640" />
<rect x="1160.6" y="1154.6" width="84.7" height="26.4" fill="#e6b73e" />
<rect x="1160.6" y="1181.0" width="84.7" height="6.2" fill="#efcf8c" />
<rect x="1288.0" y="1003.5" width="84.0" height="81.9" fill="#e5503f" />
<rect x="1288.0" y="1085.4" width="84.0" height="61.5" fill="#ec8640" />
<rect x="1288.0" y="1146.9" width="84.0" height="28.1" fill="#e6b73e" />
<rect x="1288.0" y="1175.0" width="84.0" height="12.2" fill="#efcf8c" />
<rect x="1414.0" y="1041.0" width="84.0" height="67.7" fill="#e5503f" />
<rect x="1414.0" y="1108.7" width="84.0" height="52.0" fill="#ec8640" />
<rect x="1414.0" y="1160.7" width="84.0" height="21.3" fill="#e6b73e" />
<rect x="1414.0" y="1182.0" width="84.0" height="5.2" fill="#efcf8c" />
<rect x="1541.0" y="1010.0" width="84.7" height="87.6" fill="#e5503f" />
<rect x="1541.0" y="1097.6" width="84.7" height="55.4" fill="#ec8640" />
<rect x="1541.0" y="1153.0" width="84.7" height="26.0" fill="#e6b73e" />
<rect x="1541.0" y="1179.0" width="84.7" height="8.2" fill="#efcf8c" />
<rect x="1667.0" y="1034.5" width="84.4" height="63.1" fill="#e5503f" />
<rect x="1667.0" y="1097.6" width="84.4" height="49.8" fill="#ec8640" />
<rect x="1667.0" y="1147.4" width="84.4" height="29.6" fill="#e6b73e" />
<rect x="1667.0" y="1177.0" width="84.4" height="10.2" fill="#efcf8c" />
<rect x="1793.5" y="1006.8" width="84.1" height="80.8" fill="#e5503f" />
<rect x="1793.5" y="1087.6" width="84.1" height="53.7" fill="#ec8640" />
<rect x="1793.5" y="1141.3" width="84.1" height="34.7" fill="#e6b73e" />
<rect x="1793.5" y="1176.0" width="84.1" height="11.2" fill="#efcf8c" />
<rect x="1920.3" y="1057.2" width="57.0" height="62.6" fill="#e5503f" />
<rect x="1920.3" y="1119.8" width="57.0" height="45.9" fill="#ec8640" />
<rect x="1920.3" y="1165.7" width="57.0" height="19.3" fill="#e6b73e" />
<rect x="1920.3" y="1185.0" width="57.0" height="2.2" fill="#efcf8c" />
</g>
<text x="2172.5" y="969.0" font-size="17" fill="#4ba3f0" text-anchor="middle" font-weight="normal"  stroke="#4ba3f0" stroke-width="0.4">avg</text>
<rect x="2008" y="991.6" width="19" height="6" rx="3" fill="#fbeccb"/>
<text x="2041.0" y="1000.6" font-size="17" fill="#dcdde6" text-anchor="start" font-weight="normal" >upper_25</text>
<text x="2197.0" y="1000.6" font-size="17" fill="#dcdde6" text-anchor="end" font-weight="normal" >6.81 ms</text>
<rect x="2005.0" y="1013.0" width="195.0" height="36.0" fill="#201f28" />
<rect x="2008" y="1027.5" width="19" height="6" rx="3" fill="#f3c37e"/>
<text x="2041.0" y="1036.5" font-size="17" fill="#dcdde6" text-anchor="start" font-weight="normal" >upper_50</text>
<text x="2197.0" y="1036.5" font-size="17" fill="#dcdde6" text-anchor="end" font-weight="normal" >142 ms</text>
<rect x="2008" y="1063.4" width="19" height="6" rx="3" fill="#e8c25e"/>
<text x="2041.0" y="1072.4" font-size="17" fill="#dcdde6" text-anchor="start" font-weight="normal" >upper_75</text>
<text x="2197.0" y="1072.4" font-size="17" fill="#dcdde6" text-anchor="end" font-weight="normal" >535 ms</text>
<rect x="2005.0" y="1084.8" width="195.0" height="36.0" fill="#201f28" />
<rect x="2008" y="1099.3" width="19" height="6" rx="3" fill="#f08a3c"/>
<text x="2041.0" y="1108.3" font-size="17" fill="#dcdde6" text-anchor="start" font-weight="normal" >upper_90</text>
<text x="2197.0" y="1108.3" font-size="17" fill="#dcdde6" text-anchor="end" font-weight="normal" >1.04 s</text>
<rect x="2008" y="1135.2" width="19" height="6" rx="3" fill="#e55a5a"/>
<text x="2041.0" y="1144.2" font-size="17" fill="#dcdde6" text-anchor="start" font-weight="normal" >upper_95</text>
<text x="2197.0" y="1144.2" font-size="17" fill="#dcdde6" text-anchor="end" font-weight="normal" >1.46 s</text>
</svg></body></html>
